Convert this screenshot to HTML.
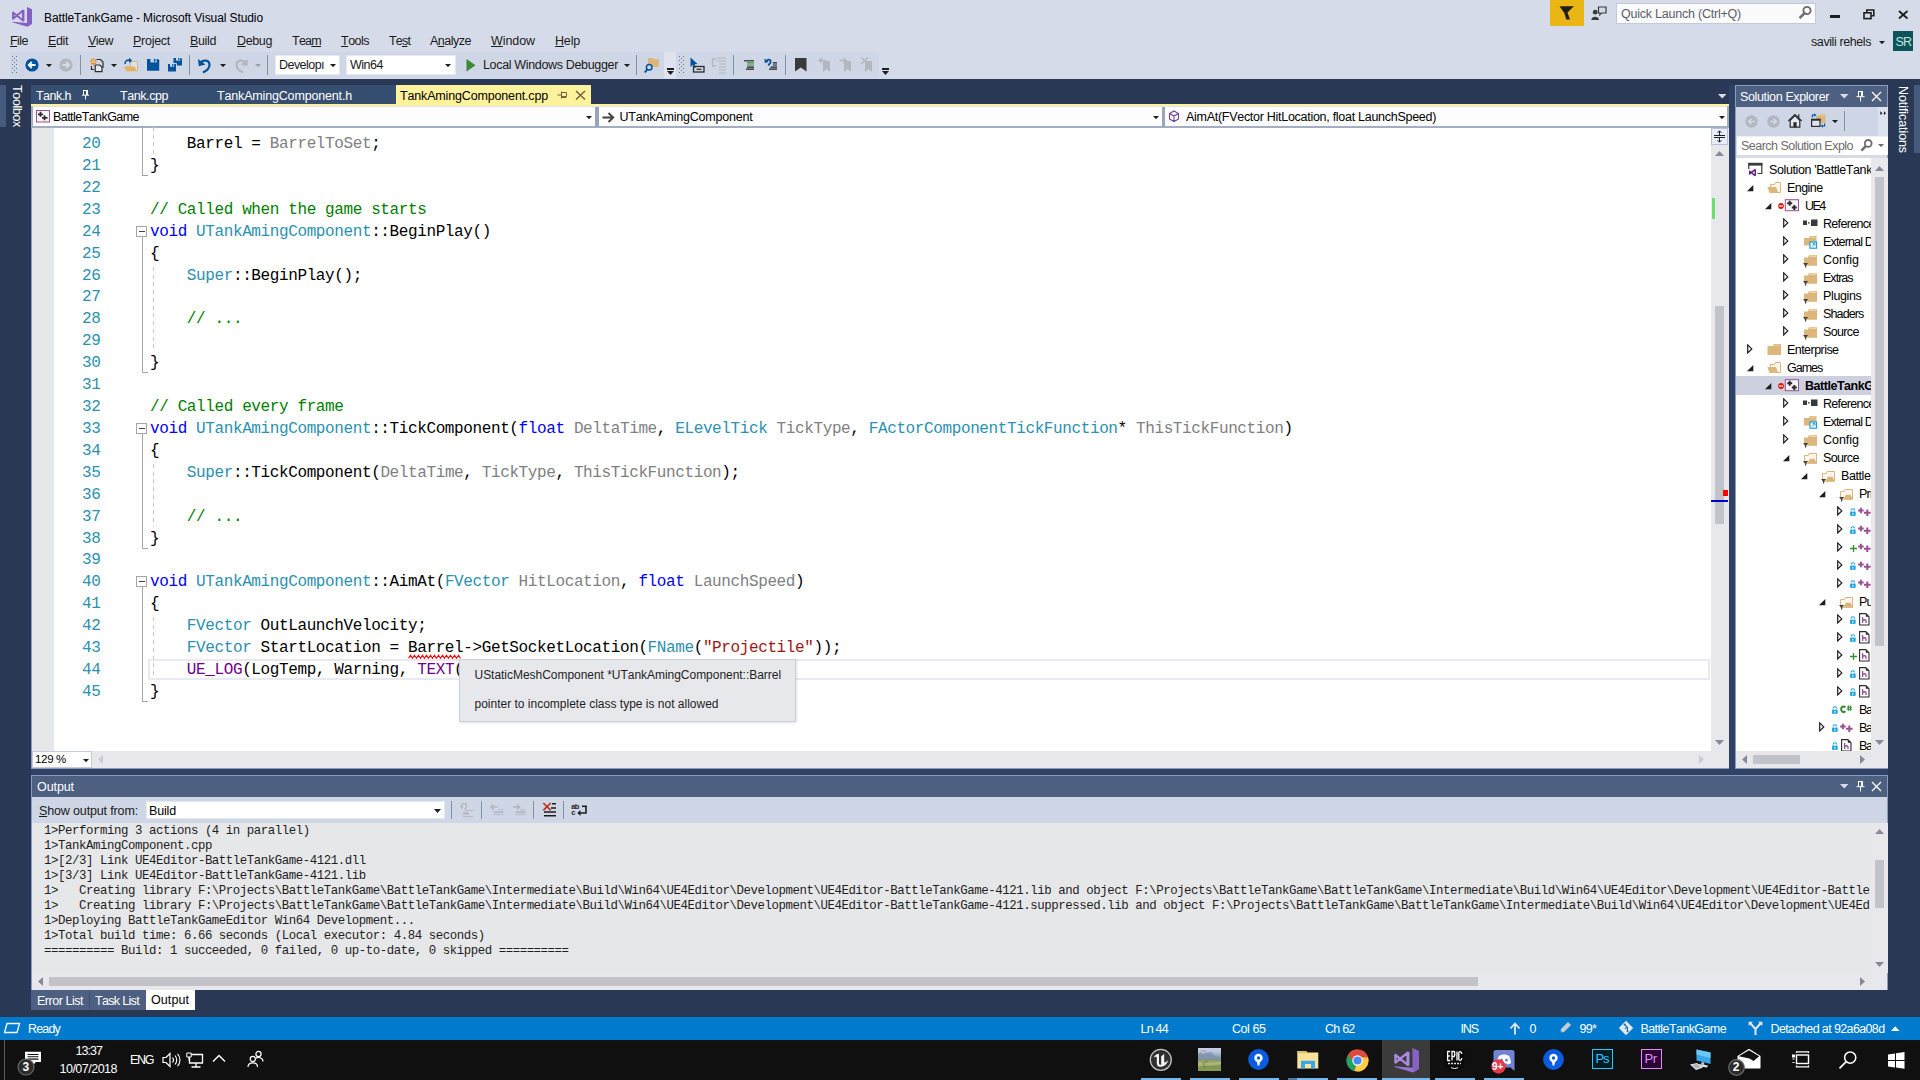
<!DOCTYPE html>
<html><head><meta charset="utf-8"><title>BattleTankGame - Microsoft Visual Studio</title>
<style>
html,body{margin:0;padding:0;}
body{width:1920px;height:1080px;overflow:hidden;position:relative;background:#293955;font-family:"Liberation Sans",sans-serif;font-kerning:none;}
.t{position:absolute;white-space:pre;overflow:visible;}
.r{position:absolute;}
.m{font-family:"Liberation Mono",monospace;}
u{text-decoration:underline;text-underline-offset:1px;}
</style></head>
<body>
<!-- top -->
<div class="r" style="left:0px;top:0px;width:1920px;height:79px;background:#d6dbe9;"></div>
<div class="r" style="left:10px;top:52px;width:654px;height:26px;background:#cfd6e5;"></div>
<div class="r" style="left:664px;top:52px;width:12px;height:26px;background:#dfe3ef;"></div>
<div class="r" style="left:676px;top:52px;width:203px;height:26px;background:#cfd6e5;"></div>
<svg class="r" style="left:11px;top:6px;" width="22" height="22" viewBox="0 0 22 22"><path d="M16 1 L21 3.3 V18 L16.4 20.8 L1 16.3 L1.6 15.7 L16 17Z" fill="#865fc5"/><path d="M2 6.5 V12.7 L12 4.6 V14.6Z" stroke="#865fc5" stroke-width="1.9" fill="none" stroke-linejoin="round"/><path d="M12.3 4 V15.2" stroke="#865fc5" stroke-width="2.2"/></svg>
<div class="t" style="left:44px;top:8.992px;font-size:12px;line-height:18px;height:18px;color:#000;letter-spacing:-0.094px;">BattleTankGame - Microsoft Visual Studio</div>
<div class="t" style="left:10px;top:31.5687px;font-size:12.5px;line-height:18.5px;height:18.5px;color:#1b1b1b;letter-spacing:-0.534px;"><u>F</u>ile</div>
<div class="t" style="left:48px;top:31.5687px;font-size:12.5px;line-height:18.5px;height:18.5px;color:#1b1b1b;letter-spacing:-0.384px;"><u>E</u>dit</div>
<div class="t" style="left:88px;top:31.5687px;font-size:12.5px;line-height:18.5px;height:18.5px;color:#1b1b1b;letter-spacing:-0.522px;"><u>V</u>iew</div>
<div class="t" style="left:133px;top:31.5687px;font-size:12.5px;line-height:18.5px;height:18.5px;color:#1b1b1b;letter-spacing:-0.271px;"><u>P</u>roject</div>
<div class="t" style="left:190px;top:31.5687px;font-size:12.5px;line-height:18.5px;height:18.5px;color:#1b1b1b;letter-spacing:-0.358px;"><u>B</u>uild</div>
<div class="t" style="left:237px;top:31.5687px;font-size:12.5px;line-height:18.5px;height:18.5px;color:#1b1b1b;letter-spacing:-0.365px;"><u>D</u>ebug</div>
<div class="t" style="left:292px;top:31.5687px;font-size:12.5px;line-height:18.5px;height:18.5px;color:#1b1b1b;letter-spacing:-0.737px;">Tea<u>m</u></div>
<div class="t" style="left:341px;top:31.5687px;font-size:12.5px;line-height:18.5px;height:18.5px;color:#1b1b1b;letter-spacing:-0.512px;"><u>T</u>ools</div>
<div class="t" style="left:389px;top:31.5687px;font-size:12.5px;line-height:18.5px;height:18.5px;color:#1b1b1b;letter-spacing:-0.828px;">Te<u>s</u>t</div>
<div class="t" style="left:430px;top:31.5687px;font-size:12.5px;line-height:18.5px;height:18.5px;color:#1b1b1b;letter-spacing:-0.495px;">A<u>n</u>alyze</div>
<div class="t" style="left:491px;top:31.5687px;font-size:12.5px;line-height:18.5px;height:18.5px;color:#1b1b1b;letter-spacing:-0.075px;"><u>W</u>indow</div>
<div class="t" style="left:555px;top:31.5687px;font-size:12.5px;line-height:18.5px;height:18.5px;color:#1b1b1b;letter-spacing:-0.175px;"><u>H</u>elp</div>
<svg class="r" style="left:12px;top:56px" width="6" height="18"><rect x="0" y="0" width="1" height="1" fill="#6b7590"/><rect x="2" y="2" width="1" height="1" fill="#6b7590"/><rect x="0" y="4" width="1" height="1" fill="#6b7590"/><rect x="2" y="6" width="1" height="1" fill="#6b7590"/><rect x="0" y="8" width="1" height="1" fill="#6b7590"/><rect x="2" y="10" width="1" height="1" fill="#6b7590"/><rect x="0" y="12" width="1" height="1" fill="#6b7590"/><rect x="2" y="14" width="1" height="1" fill="#6b7590"/><rect x="0" y="16" width="1" height="1" fill="#6b7590"/><rect x="4" y="0" width="1" height="1" fill="#6b7590"/><rect x="4" y="4" width="1" height="1" fill="#6b7590"/><rect x="4" y="8" width="1" height="1" fill="#6b7590"/><rect x="4" y="12" width="1" height="1" fill="#6b7590"/><rect x="4" y="16" width="1" height="1" fill="#6b7590"/></svg>
<svg class="r" style="left:679px;top:56px" width="6" height="18"><rect x="0" y="0" width="1" height="1" fill="#6b7590"/><rect x="2" y="2" width="1" height="1" fill="#6b7590"/><rect x="0" y="4" width="1" height="1" fill="#6b7590"/><rect x="2" y="6" width="1" height="1" fill="#6b7590"/><rect x="0" y="8" width="1" height="1" fill="#6b7590"/><rect x="2" y="10" width="1" height="1" fill="#6b7590"/><rect x="0" y="12" width="1" height="1" fill="#6b7590"/><rect x="2" y="14" width="1" height="1" fill="#6b7590"/><rect x="0" y="16" width="1" height="1" fill="#6b7590"/><rect x="4" y="0" width="1" height="1" fill="#6b7590"/><rect x="4" y="4" width="1" height="1" fill="#6b7590"/><rect x="4" y="8" width="1" height="1" fill="#6b7590"/><rect x="4" y="12" width="1" height="1" fill="#6b7590"/><rect x="4" y="16" width="1" height="1" fill="#6b7590"/></svg>
<svg class="r" style="left:25px;top:58px;" width="14" height="14" viewBox="0 0 14 14"><circle cx="7" cy="7" r="6.6" fill="#00539c"/><path d="M10.5 7 L4 7 M6.8 4 L3.8 7 L6.8 10" stroke="#fff" stroke-width="1.8" fill="none"/></svg>
<svg class="r" style="left:46px;top:64px;" width="6" height="3.2" viewBox="0 0 6 3.2"><path d="M0 0 L6 0 L3 3.2Z" fill="#1e1e1e"/></svg>
<svg class="r" style="left:59px;top:58px;" width="14" height="14" viewBox="0 0 14 14"><circle cx="7" cy="7" r="6.6" fill="#b3b7c0"/><path d="M3.5 7 L10 7 M7.2 4 L10.2 7 L7.2 10" stroke="#d6dbe9" stroke-width="1.8" fill="none"/></svg>
<div class="r" style="left:80px;top:55px;width:1px;height:20px;background:#8591a8;"></div>
<svg class="r" style="left:89px;top:57px;" width="17" height="17" viewBox="0 0 17 17"><path d="M7.5 2.5 H11.5 L14 5 V11" fill="none" stroke="#2b2b2b" stroke-width="1.2"/><path d="M6.2 8 H10.8 L13 10.2 V14.6 H6.2Z" fill="#e4e8f2" stroke="#2b2b2b" stroke-width="1.2"/><path d="M2.5 9 V12.5 H5" fill="none" stroke="#2b2b2b" stroke-width="1.2"/><path d="M4.4 1.3 V8.3 M0.9 4.8 H7.9 M1.9 2.3 L6.9 7.3 M6.9 2.3 L1.9 7.3" stroke="#e08a1e" stroke-width="1.1"/><circle cx="4.4" cy="4.8" r="1.3" fill="#f7d9a0"/></svg>
<svg class="r" style="left:111px;top:64px;" width="6" height="3.2" viewBox="0 0 6 3.2"><path d="M0 0 L6 0 L3 3.2Z" fill="#1e1e1e"/></svg>
<svg class="r" style="left:123px;top:57px;" width="17" height="17" viewBox="0 0 17 17"><path d="M7.5 4.5 H14.5 V13.5 H7.5Z" fill="#dde0ea" stroke="#dcb67a" stroke-width="1"/><path d="M1 9.5 H11.5 L14 14.3 H3.2Z" fill="#e5b260"/><path d="M2.2 7 C1.6 3.5 4.5 2.6 7.5 3.4" stroke="#00539c" stroke-width="1.6" fill="none"/><path d="M6 0.8 L9.2 3.4 L6 6Z" fill="#00539c"/></svg>
<svg class="r" style="left:146px;top:58px;" width="14" height="14" viewBox="0 0 14 14"><path d="M1 1 H12 L13.2 2.2 V12.8 H1Z" fill="#00539c"/><rect x="4.5" y="1" width="6.2" height="3.4" fill="#cfd6e5"/><rect x="7.8" y="1" width="1.7" height="2.6" fill="#00539c"/></svg>
<svg class="r" style="left:166px;top:57px;" width="17" height="17" viewBox="0 0 17 17"><path d="M7.5 1 H15 L16 2 V8.5 H7.5Z" fill="#00539c"/><rect x="10" y="1" width="4.2" height="2.6" fill="#cfd6e5"/><rect x="12.2" y="1" width="1.2" height="2" fill="#00539c"/><path d="M1.5 6.5 H10.5 V15 H1.5Z" fill="#00539c" stroke="#cfd6e5" stroke-width="1"/><rect x="4" y="7" width="4.2" height="2.6" fill="#cfd6e5"/><rect x="6.2" y="7" width="1.2" height="2" fill="#00539c"/></svg>
<div class="r" style="left:189px;top:55px;width:1px;height:20px;background:#8591a8;"></div>
<svg class="r" style="left:197px;top:57px;" width="16" height="17" viewBox="0 0 16 17"><path d="M3 6.5 C6 2 12.5 3 12.5 8 C12.5 11 10 13.5 6 15.5" fill="none" stroke="#00539c" stroke-width="2.2"/><path d="M1 2 L1.8 9.2 L8.5 7.5Z" fill="#00539c"/></svg>
<svg class="r" style="left:220px;top:64px;" width="6" height="3.2" viewBox="0 0 6 3.2"><path d="M0 0 L6 0 L3 3.2Z" fill="#1e1e1e"/></svg>
<svg class="r" style="left:233px;top:57px;" width="16" height="17" viewBox="0 0 16 17"><path d="M13 6.5 C10 2 3.5 3 3.5 8 C3.5 11 6 13.5 10 15.5" fill="none" stroke="#b3b7c0" stroke-width="2.2"/><path d="M15 2 L14.2 9.2 L7.5 7.5Z" fill="#b3b7c0"/></svg>
<svg class="r" style="left:255px;top:64px;" width="6" height="3.2" viewBox="0 0 6 3.2"><path d="M0 0 L6 0 L3 3.2Z" fill="#9a9fa9"/></svg>
<div class="r" style="left:267px;top:55px;width:1px;height:20px;background:#8591a8;"></div>
<div class="r" style="left:275px;top:54.7px;width:64.7px;height:20.8px;background:#fff;border:1px solid #e4e8f1;box-sizing:border-box;"></div>
<div class="t" style="left:279px;top:55.5688px;font-size:12.5px;line-height:18.5px;height:18.5px;color:#1b1b1b;letter-spacing:-0.541px;">Developı</div>
<svg class="r" style="left:330px;top:64px;" width="6" height="3.2" viewBox="0 0 6 3.2"><path d="M0 0 L6 0 L3 3.2Z" fill="#1e1e1e"/></svg>
<div class="r" style="left:346px;top:54.7px;width:109.5px;height:20.8px;background:#fff;border:1px solid #e4e8f1;box-sizing:border-box;"></div>
<div class="t" style="left:350px;top:55.5688px;font-size:12.5px;line-height:18.5px;height:18.5px;color:#1b1b1b;letter-spacing:-0.485px;">Win64</div>
<svg class="r" style="left:445px;top:64px;" width="6" height="3.2" viewBox="0 0 6 3.2"><path d="M0 0 L6 0 L3 3.2Z" fill="#1e1e1e"/></svg>
<svg class="r" style="left:466px;top:59px;" width="10" height="13" viewBox="0 0 10 13"><path d="M0.5 0 L9.5 6.2 L0.5 12.5Z" fill="#388a34"/></svg>
<div class="t" style="left:483px;top:55.5688px;font-size:12.5px;line-height:18.5px;height:18.5px;color:#1b1b1b;letter-spacing:-0.337px;">Local Windows Debugger</div>
<svg class="r" style="left:624px;top:64px;" width="6" height="3.2" viewBox="0 0 6 3.2"><path d="M0 0 L6 0 L3 3.2Z" fill="#1e1e1e"/></svg>
<div class="r" style="left:636px;top:55px;width:1px;height:20px;background:#8591a8;"></div>
<svg class="r" style="left:644px;top:57px;" width="17" height="17" viewBox="0 0 17 17"><path d="M4 1 H9 L10 2.2 H15 V10 H4Z" fill="#dcb67a"/><circle cx="5.2" cy="10.2" r="2.8" fill="#cfd6e5" stroke="#00539c" stroke-width="1.5"/><path d="M3.4 12.2 L0.8 15.5" stroke="#00539c" stroke-width="2"/></svg>
<div class="r" style="left:666.5px;top:68px;width:7px;height:1.5px;background:#1e1e1e;"></div>
<svg class="r" style="left:666.5px;top:70.5px;" width="7" height="4" viewBox="0 0 7 4"><path d="M0 0 L7 0 L3.5 4Z" fill="#1e1e1e"/></svg>
<svg class="r" style="left:689px;top:57px;" width="17" height="17" viewBox="0 0 17 17"><path d="M1.5 0.5 L1.5 10 L4 7.8 L5.5 11 L7 10.2 L5.6 7.2 L8.5 7Z" fill="#00539c"/><rect x="4.5" y="9.5" width="10.5" height="5.5" fill="none" stroke="#2b2b2b" stroke-width="1.3"/><path d="M7.5 12.3 H12.5" stroke="#2b2b2b" stroke-width="1.2"/></svg>
<svg class="r" style="left:711px;top:57px;" width="17" height="17" viewBox="0 0 17 17"><path d="M5 2 H1.5 V9 H5" fill="none" stroke="#b3b7c0" stroke-width="1.3"/><path d="M6 1 H15 M6 4 H15 M8 7 H15 M8 10 H15 M8 13 H15 M8 16 H15" stroke="#b3b7c0" stroke-width="1.2"/></svg>
<div class="r" style="left:733px;top:55px;width:1px;height:20px;background:#8591a8;"></div>
<svg class="r" style="left:743px;top:58px;" width="12" height="14" viewBox="0 0 12 14"><path d="M1 2.8 H11" stroke="#1e1e1e" stroke-width="1.1"/><path d="M4 4.9 H11 M4 7 H11" stroke="#388a34" stroke-width="1.1"/><path d="M4 9.1 H11 M3 11.1 H11" stroke="#1e1e1e" stroke-width="1.1"/></svg>
<svg class="r" style="left:764px;top:57px;" width="15" height="16" viewBox="0 0 15 16"><path d="M2.4 4 C3.6 1.8 7 2.4 6.6 5 C6.4 6.6 4.8 7 4.4 8.6" fill="none" stroke="#00539c" stroke-width="1.7"/><path d="M0.4 1.4 L0.8 6 L4.8 5Z" fill="#00539c"/><path d="M8.8 5.9 H13 M8.8 8 H13 M6.5 10.1 H13 M5 12.1 H13" stroke="#1e1e1e" stroke-width="1.1"/></svg>
<div class="r" style="left:785px;top:55px;width:1px;height:20px;background:#8591a8;"></div>
<svg class="r" style="left:795px;top:58px;" width="12" height="14" viewBox="0 0 12 14"><path d="M0 0 H11.5 V13.5 L5.75 9.6 L0 13.5Z" fill="#3a3a3a"/></svg>
<svg class="r" style="left:818px;top:57px;" width="14" height="16" viewBox="0 0 14 16"><path d="M5 4 H12 V15 L8.5 12 L5 15Z" fill="#b3b7c0"/><path d="M8 3.5 H1.5 M4 1 L1.2 3.5 L4 6" stroke="#b3b7c0" stroke-width="1.5" fill="none"/></svg>
<svg class="r" style="left:839px;top:57px;" width="14" height="16" viewBox="0 0 14 16"><path d="M5 4 H12 V15 L8.5 12 L5 15Z" fill="#b3b7c0"/><path d="M0.5 3.5 H7 M4.5 1 L7.3 3.5 L4.5 6" stroke="#b3b7c0" stroke-width="1.5" fill="none"/></svg>
<svg class="r" style="left:860px;top:57px;" width="14" height="16" viewBox="0 0 14 16"><path d="M5 4 H12 V15 L8.5 12 L5 15Z" fill="#b3b7c0"/><path d="M1 0.5 L8 7 M8 0.5 L1 7" stroke="#b3b7c0" stroke-width="1.5" fill="none"/></svg>
<div class="r" style="left:882px;top:68px;width:7px;height:1.5px;background:#1e1e1e;"></div>
<svg class="r" style="left:882px;top:70.5px;" width="7" height="4" viewBox="0 0 7 4"><path d="M0 0 L7 0 L3.5 4Z" fill="#1e1e1e"/></svg>
<div class="r" style="left:1550px;top:0px;width:34px;height:26px;background:#eab613;"></div>
<svg class="r" style="left:1559px;top:5px;" width="16" height="16" viewBox="0 0 16 16"><path d="M0.5 1.3 H14.8 L8.5 7.5 L11 14.5 H7.3 L5.3 8Z" fill="#1e1e1e"/></svg>
<svg class="r" style="left:1591px;top:6px;" width="16" height="15" viewBox="0 0 16 15"><circle cx="4.2" cy="6.2" r="2.4" fill="#3a3a3a"/><path d="M0.3 14 C0.3 9.8 8 9.8 8 14Z" fill="#3a3a3a"/><path d="M7.5 1 H15 V7 H10.5 L8.8 8.8 V7 H7.5Z" fill="none" stroke="#3a3a3a" stroke-width="1.2"/></svg>
<div class="r" style="left:1616px;top:2.5px;width:199.5px;height:21.5px;background:#fbfbfd;border:1px solid #c2c9d9;box-sizing:border-box;"></div>
<div class="t" style="left:1621px;top:4.56875px;font-size:12.5px;line-height:18.5px;height:18.5px;color:#5a5e68;letter-spacing:-0.223px;">Quick Launch (Ctrl+Q)</div>
<svg class="r" style="left:1797px;top:5px;" width="16" height="16" viewBox="0 0 16 16"><circle cx="10" cy="5.5" r="3.6" fill="none" stroke="#6d6d6d" stroke-width="1.9"/><path d="M7.3 8.3 L2.6 13.2" stroke="#6d6d6d" stroke-width="2.6"/></svg>
<div class="r" style="left:1830px;top:15px;width:10px;height:2.5px;background:#1e1e1e;"></div>
<svg class="r" style="left:1863px;top:9px;" width="12" height="10.5" viewBox="0 0 12 10.5"><rect x="1" y="3.8" width="7" height="5.8" fill="none" stroke="#1e1e1e" stroke-width="1.6"/><path d="M3.8 3.5 V1 H10.8 V6.8 H8.5" fill="none" stroke="#1e1e1e" stroke-width="1.6"/></svg>
<svg class="r" style="left:1897.5px;top:9.5px;" width="10.5" height="9.5" viewBox="0 0 10.5 9.5"><path d="M1 1 L9.5 8.5 M9.5 1 L1 8.5" stroke="#1e1e1e" stroke-width="1.9"/></svg>
<div class="t" style="left:1811px;top:32.5688px;font-size:12.5px;line-height:18.5px;height:18.5px;color:#1b1b1b;letter-spacing:-0.407px;">savili rehels</div>
<svg class="r" style="left:1879px;top:40.5px;" width="6" height="3.2" viewBox="0 0 6 3.2"><path d="M0 0 L6 0 L3 3.2Z" fill="#1e1e1e"/></svg>
<div class="r" style="left:1893px;top:31px;width:20px;height:20px;background:#0b5558;"></div>
<div class="t" style="left:1895.5px;top:32.5688px;font-size:12.5px;line-height:18.5px;height:18.5px;color:#c7e0df;letter-spacing:-0.931px;">SR</div>
<!-- mid -->
<div class="r" style="left:1729px;top:85px;width:6px;height:684px;background:#2f4266;"></div>
<div class="r" style="left:31px;top:769px;width:1857px;height:6px;background:#2f4266;"></div>
<div class="r" style="left:0px;top:85px;width:6px;height:42px;background:#465a7d;"></div>
<div class="t" style="left:0px;top:85px;width:50px;height:18px;font-size:12.5px;line-height:18px;color:#fff;transform-origin:0 0;transform:translate(26px,0) rotate(90deg);letter-spacing:-0.35px;">Toolbox</div>
<div class="r" style="left:31px;top:85px;width:365px;height:19px;background:#364e6f;"></div>
<div class="t" style="left:36px;top:86.5688px;font-size:12.5px;line-height:18.5px;height:18.5px;color:#fff;letter-spacing:-0.535px;">Tank.h</div>
<svg class="r" style="left:81px;top:90px;" width="9" height="10" viewBox="0 0 9 10"><path d="M2 0.5 H7 M2.5 0.5 V5 M6.5 0.5 V5 M5.5 0.5 V5 M1 5.2 H8 M4.5 5.5 V9.5" stroke="#fff" stroke-width="1" fill="none"/></svg>
<div class="t" style="left:120px;top:86.5688px;font-size:12.5px;line-height:18.5px;height:18.5px;color:#fff;letter-spacing:-0.427px;">Tank.cpp</div>
<div class="t" style="left:217px;top:86.5688px;font-size:12.5px;line-height:18.5px;height:18.5px;color:#fff;letter-spacing:-0.163px;">TankAmingComponent.h</div>
<div class="r" style="left:396px;top:85px;width:195px;height:21px;background:#fff29d;"></div>
<div class="t" style="left:400px;top:86.5688px;font-size:12.5px;line-height:18.5px;height:18.5px;color:#000;letter-spacing:-0.157px;">TankAmingComponent.cpp</div>
<svg class="r" style="left:557px;top:90px;" width="11" height="10" viewBox="0 0 11 10"><path d="M0.5 5 H4 M4.5 1.5 V8.5 M4.5 2.5 H9.5 V6.5 H4.5 M4.5 7.5 H9.5" stroke="#75633d" stroke-width="1" fill="none"/></svg>
<svg class="r" style="left:575px;top:89.5px;" width="12" height="11" viewBox="0 0 12 11"><path d="M1 1 L10 9.5 M10 1 L1 9.5" stroke="#75633d" stroke-width="1.5"/></svg>
<svg class="r" style="left:1718px;top:93.5px;" width="9" height="5" viewBox="0 0 9 5"><path d="M0 0 H8.5 L4.25 4.5Z" fill="#d6dbe9"/></svg>
<div class="r" style="left:31px;top:104px;width:1698px;height:2px;background:#fff29d;"></div>
<div class="r" style="left:31px;top:106px;width:1698px;height:22px;background:#fdfdfe;"></div>
<div class="r" style="left:31px;top:106px;width:1698px;height:1px;background:#dfe3ee;"></div>
<div class="r" style="left:31px;top:126px;width:1698px;height:2px;background:#a3adc4;"></div>
<div class="r" style="left:31px;top:106px;width:2px;height:22px;background:#a3adc4;"></div>
<div class="r" style="left:1727px;top:106px;width:2px;height:22px;background:#a3adc4;"></div>
<div class="r" style="left:595px;top:107px;width:3.5px;height:20px;background:#9aa5bd;"></div>
<div class="r" style="left:1161.5px;top:107px;width:3.5px;height:20px;background:#9aa5bd;"></div>
<svg class="r" style="left:586px;top:116px;" width="6" height="3.2" viewBox="0 0 6 3.2"><path d="M0 0 L6 0 L3 3.2Z" fill="#1e1e1e"/></svg>
<svg class="r" style="left:1153px;top:116px;" width="6" height="3.2" viewBox="0 0 6 3.2"><path d="M0 0 L6 0 L3 3.2Z" fill="#1e1e1e"/></svg>
<svg class="r" style="left:1718.5px;top:116px;" width="6" height="3.2" viewBox="0 0 6 3.2"><path d="M0 0 L6 0 L3 3.2Z" fill="#1e1e1e"/></svg>
<svg class="r" style="left:36px;top:110px;" width="14" height="13" viewBox="0 0 14 13"><rect x="0.5" y="0.5" width="13" height="11.5" fill="#f5f5f5" stroke="#9b4f96" stroke-width="1"/><path d="M4.5 1.8 V6.8 M2 4.3 H7 M8.5 5.3 V10.3 M6 7.8 H11.5" stroke="#2b2b2b" stroke-width="1.7"/></svg>
<div class="t" style="left:53px;top:107.569px;font-size:12.5px;line-height:18.5px;height:18.5px;color:#000;letter-spacing:-0.556px;">BattleTankGame</div>
<svg class="r" style="left:602px;top:112px;" width="13" height="11" viewBox="0 0 13 11"><path d="M0.5 5.5 H11 M6.5 1 L11.2 5.5 L6.5 10" stroke="#424242" stroke-width="1.9" fill="none"/></svg>
<div class="t" style="left:619.5px;top:107.569px;font-size:12.5px;line-height:18.5px;height:18.5px;color:#000;letter-spacing:-0.203px;">UTankAmingComponent</div>
<svg class="r" style="left:1168px;top:110px;" width="12" height="13" viewBox="0 0 12 13"><path d="M6 1 L10.5 3.5 V9 L6 11.5 L1.5 9 V3.5Z M1.5 3.5 L6 6 L10.5 3.5 M6 6 V11.5" fill="none" stroke="#6f3f9c" stroke-width="1.1"/></svg>
<div class="t" style="left:1186px;top:107.569px;font-size:12.5px;line-height:18.5px;height:18.5px;color:#000;letter-spacing:-0.280px;">AimAt(FVector HitLocation, float LaunchSpeed)</div>
<div class="r" style="left:31px;top:128px;width:1698px;height:641px;background:#fff;"></div>
<div class="r" style="left:31px;top:128px;width:23px;height:623px;background:#e6e7e8;"></div>
<div class="r" style="left:142px;top:128px;width:1px;height:48px;background:#a5a5a5;"></div>
<div class="r" style="left:142px;top:175px;width:6px;height:1px;background:#a5a5a5;"></div>
<div class="r" style="left:142px;top:237px;width:1px;height:136px;background:#a5a5a5;"></div>
<div class="r" style="left:142px;top:372px;width:6px;height:1px;background:#a5a5a5;"></div>
<div class="r" style="left:136px;top:226px;width:11px;height:11px;background:#fff;border:1px solid #a5a5a5;box-sizing:border-box;"></div>
<div class="r" style="left:138.5px;top:231px;width:6px;height:1px;background:#444;"></div>
<div class="r" style="left:142px;top:434px;width:1px;height:115px;background:#a5a5a5;"></div>
<div class="r" style="left:142px;top:548px;width:6px;height:1px;background:#a5a5a5;"></div>
<div class="r" style="left:136px;top:423px;width:11px;height:11px;background:#fff;border:1px solid #a5a5a5;box-sizing:border-box;"></div>
<div class="r" style="left:138.5px;top:428px;width:6px;height:1px;background:#444;"></div>
<div class="r" style="left:142px;top:587px;width:1px;height:115px;background:#a5a5a5;"></div>
<div class="r" style="left:142px;top:701px;width:6px;height:1px;background:#a5a5a5;"></div>
<div class="r" style="left:136px;top:576px;width:11px;height:11px;background:#fff;border:1px solid #a5a5a5;box-sizing:border-box;"></div>
<div class="r" style="left:138.5px;top:581px;width:6px;height:1px;background:#444;"></div>
<div class="r" style="left:153px;top:127.4px;width:1px;height:26.2px;background:repeating-linear-gradient(to bottom,#c6c6c6 0 4px,transparent 4px 7.73px);"></div>
<div class="r" style="left:153px;top:266.7px;width:1px;height:83.9px;background:repeating-linear-gradient(to bottom,#c6c6c6 0 4px,transparent 4px 7.73px);"></div>
<div class="r" style="left:153px;top:463.7px;width:1px;height:62.9px;background:repeating-linear-gradient(to bottom,#c6c6c6 0 4px,transparent 4px 7.73px);"></div>
<div class="r" style="left:153px;top:616.7px;width:1px;height:62.9px;background:repeating-linear-gradient(to bottom,#c6c6c6 0 4px,transparent 4px 7.73px);"></div>
<div class="r" style="left:148px;top:658.5px;width:1562px;height:21.5px;background:transparent;border:2px solid #e9e9f3;box-sizing:border-box;"></div>
<div class="t m" style="left:82px;top:133px;font-size:16px;line-height:22px;height:22px;color:#2b91af;letter-spacing:-0.387px;">20</div>
<div class="t m" style="left:150px;top:133px;font-size:16px;line-height:22px;height:22px;letter-spacing:-0.387px;"><span style="position:absolute;left:36.86px;color:#000000">Barrel = </span><span style="position:absolute;left:119.80px;color:#808080">BarrelToSet</span><span style="position:absolute;left:221.16px;color:#000000">;</span></div>
<div class="t m" style="left:82px;top:155px;font-size:16px;line-height:22px;height:22px;color:#2b91af;letter-spacing:-0.387px;">21</div>
<div class="t m" style="left:150px;top:155px;font-size:16px;line-height:22px;height:22px;letter-spacing:-0.387px;"><span style="position:absolute;left:0.00px;color:#000000">}</span></div>
<div class="t m" style="left:82px;top:177px;font-size:16px;line-height:22px;height:22px;color:#2b91af;letter-spacing:-0.387px;">22</div>
<div class="t m" style="left:82px;top:199px;font-size:16px;line-height:22px;height:22px;color:#2b91af;letter-spacing:-0.387px;">23</div>
<div class="t m" style="left:150px;top:199px;font-size:16px;line-height:22px;height:22px;letter-spacing:-0.387px;"><span style="position:absolute;left:0.00px;color:#008000">// Called when the game starts</span></div>
<div class="t m" style="left:82px;top:221px;font-size:16px;line-height:22px;height:22px;color:#2b91af;letter-spacing:-0.387px;">24</div>
<div class="t m" style="left:150px;top:221px;font-size:16px;line-height:22px;height:22px;letter-spacing:-0.387px;"><span style="position:absolute;left:0.00px;color:#0000ff">void</span><span style="position:absolute;left:46.08px;color:#2b91af">UTankAmingComponent</span><span style="position:absolute;left:221.16px;color:#000000">::BeginPlay()</span></div>
<div class="t m" style="left:82px;top:243px;font-size:16px;line-height:22px;height:22px;color:#2b91af;letter-spacing:-0.387px;">25</div>
<div class="t m" style="left:150px;top:243px;font-size:16px;line-height:22px;height:22px;letter-spacing:-0.387px;"><span style="position:absolute;left:0.00px;color:#000000">{</span></div>
<div class="t m" style="left:82px;top:265px;font-size:16px;line-height:22px;height:22px;color:#2b91af;letter-spacing:-0.387px;">26</div>
<div class="t m" style="left:150px;top:265px;font-size:16px;line-height:22px;height:22px;letter-spacing:-0.387px;"><span style="position:absolute;left:36.86px;color:#2b91af">Super</span><span style="position:absolute;left:82.94px;color:#000000">::BeginPlay();</span></div>
<div class="t m" style="left:82px;top:286px;font-size:16px;line-height:22px;height:22px;color:#2b91af;letter-spacing:-0.387px;">27</div>
<div class="t m" style="left:82px;top:308px;font-size:16px;line-height:22px;height:22px;color:#2b91af;letter-spacing:-0.387px;">28</div>
<div class="t m" style="left:150px;top:308px;font-size:16px;line-height:22px;height:22px;letter-spacing:-0.387px;"><span style="position:absolute;left:36.86px;color:#008000">// ...</span></div>
<div class="t m" style="left:82px;top:330px;font-size:16px;line-height:22px;height:22px;color:#2b91af;letter-spacing:-0.387px;">29</div>
<div class="t m" style="left:82px;top:352px;font-size:16px;line-height:22px;height:22px;color:#2b91af;letter-spacing:-0.387px;">30</div>
<div class="t m" style="left:150px;top:352px;font-size:16px;line-height:22px;height:22px;letter-spacing:-0.387px;"><span style="position:absolute;left:0.00px;color:#000000">}</span></div>
<div class="t m" style="left:82px;top:374px;font-size:16px;line-height:22px;height:22px;color:#2b91af;letter-spacing:-0.387px;">31</div>
<div class="t m" style="left:82px;top:396px;font-size:16px;line-height:22px;height:22px;color:#2b91af;letter-spacing:-0.387px;">32</div>
<div class="t m" style="left:150px;top:396px;font-size:16px;line-height:22px;height:22px;letter-spacing:-0.387px;"><span style="position:absolute;left:0.00px;color:#008000">// Called every frame</span></div>
<div class="t m" style="left:82px;top:418px;font-size:16px;line-height:22px;height:22px;color:#2b91af;letter-spacing:-0.387px;">33</div>
<div class="t m" style="left:150px;top:418px;font-size:16px;line-height:22px;height:22px;letter-spacing:-0.387px;"><span style="position:absolute;left:0.00px;color:#0000ff">void</span><span style="position:absolute;left:46.08px;color:#2b91af">UTankAmingComponent</span><span style="position:absolute;left:221.16px;color:#000000">::TickComponent(</span><span style="position:absolute;left:368.60px;color:#0000ff">float</span><span style="position:absolute;left:423.89px;color:#808080">DeltaTime</span><span style="position:absolute;left:506.82px;color:#000000">,</span><span style="position:absolute;left:525.25px;color:#2b91af">ELevelTick</span><span style="position:absolute;left:626.62px;color:#808080">TickType</span><span style="position:absolute;left:700.34px;color:#000000">,</span><span style="position:absolute;left:718.77px;color:#2b91af">FActorComponentTickFunction</span><span style="position:absolute;left:967.57px;color:#000000">*</span><span style="position:absolute;left:986.00px;color:#808080">ThisTickFunction</span><span style="position:absolute;left:1133.44px;color:#000000">)</span></div>
<div class="t m" style="left:82px;top:440px;font-size:16px;line-height:22px;height:22px;color:#2b91af;letter-spacing:-0.387px;">34</div>
<div class="t m" style="left:150px;top:440px;font-size:16px;line-height:22px;height:22px;letter-spacing:-0.387px;"><span style="position:absolute;left:0.00px;color:#000000">{</span></div>
<div class="t m" style="left:82px;top:462px;font-size:16px;line-height:22px;height:22px;color:#2b91af;letter-spacing:-0.387px;">35</div>
<div class="t m" style="left:150px;top:462px;font-size:16px;line-height:22px;height:22px;letter-spacing:-0.387px;"><span style="position:absolute;left:36.86px;color:#2b91af">Super</span><span style="position:absolute;left:82.94px;color:#000000">::TickComponent(</span><span style="position:absolute;left:230.38px;color:#808080">DeltaTime</span><span style="position:absolute;left:313.31px;color:#000000">,</span><span style="position:absolute;left:331.74px;color:#808080">TickType</span><span style="position:absolute;left:405.46px;color:#000000">,</span><span style="position:absolute;left:423.89px;color:#808080">ThisTickFunction</span><span style="position:absolute;left:571.33px;color:#000000">);</span></div>
<div class="t m" style="left:82px;top:484px;font-size:16px;line-height:22px;height:22px;color:#2b91af;letter-spacing:-0.387px;">36</div>
<div class="t m" style="left:82px;top:506px;font-size:16px;line-height:22px;height:22px;color:#2b91af;letter-spacing:-0.387px;">37</div>
<div class="t m" style="left:150px;top:506px;font-size:16px;line-height:22px;height:22px;letter-spacing:-0.387px;"><span style="position:absolute;left:36.86px;color:#008000">// ...</span></div>
<div class="t m" style="left:82px;top:528px;font-size:16px;line-height:22px;height:22px;color:#2b91af;letter-spacing:-0.387px;">38</div>
<div class="t m" style="left:150px;top:528px;font-size:16px;line-height:22px;height:22px;letter-spacing:-0.387px;"><span style="position:absolute;left:0.00px;color:#000000">}</span></div>
<div class="t m" style="left:82px;top:549px;font-size:16px;line-height:22px;height:22px;color:#2b91af;letter-spacing:-0.387px;">39</div>
<div class="t m" style="left:82px;top:571px;font-size:16px;line-height:22px;height:22px;color:#2b91af;letter-spacing:-0.387px;">40</div>
<div class="t m" style="left:150px;top:571px;font-size:16px;line-height:22px;height:22px;letter-spacing:-0.387px;"><span style="position:absolute;left:0.00px;color:#0000ff">void</span><span style="position:absolute;left:46.08px;color:#2b91af">UTankAmingComponent</span><span style="position:absolute;left:221.16px;color:#000000">::AimAt(</span><span style="position:absolute;left:294.88px;color:#2b91af">FVector</span><span style="position:absolute;left:368.60px;color:#808080">HitLocation</span><span style="position:absolute;left:469.96px;color:#000000">,</span><span style="position:absolute;left:488.39px;color:#0000ff">float</span><span style="position:absolute;left:543.68px;color:#808080">LaunchSpeed</span><span style="position:absolute;left:645.05px;color:#000000">)</span></div>
<div class="t m" style="left:82px;top:593px;font-size:16px;line-height:22px;height:22px;color:#2b91af;letter-spacing:-0.387px;">41</div>
<div class="t m" style="left:150px;top:593px;font-size:16px;line-height:22px;height:22px;letter-spacing:-0.387px;"><span style="position:absolute;left:0.00px;color:#000000">{</span></div>
<div class="t m" style="left:82px;top:615px;font-size:16px;line-height:22px;height:22px;color:#2b91af;letter-spacing:-0.387px;">42</div>
<div class="t m" style="left:150px;top:615px;font-size:16px;line-height:22px;height:22px;letter-spacing:-0.387px;"><span style="position:absolute;left:36.86px;color:#2b91af">FVector</span><span style="position:absolute;left:110.58px;color:#000000">OutLaunchVelocity;</span></div>
<div class="t m" style="left:82px;top:637px;font-size:16px;line-height:22px;height:22px;color:#2b91af;letter-spacing:-0.387px;">43</div>
<div class="t m" style="left:150px;top:637px;font-size:16px;line-height:22px;height:22px;letter-spacing:-0.387px;"><span style="position:absolute;left:36.86px;color:#2b91af">FVector</span><span style="position:absolute;left:110.58px;color:#000000">StartLocation = Barrel-&gt;GetSocketLocation(</span><span style="position:absolute;left:497.61px;color:#2b91af">FName</span><span style="position:absolute;left:543.68px;color:#000000">(</span><span style="position:absolute;left:552.90px;color:#a31515">"Projectile"</span><span style="position:absolute;left:663.48px;color:#000000">));</span></div>
<div class="t m" style="left:82px;top:659px;font-size:16px;line-height:22px;height:22px;color:#2b91af;letter-spacing:-0.387px;">44</div>
<div class="t m" style="left:150px;top:659px;font-size:16px;line-height:22px;height:22px;letter-spacing:-0.387px;"><span style="position:absolute;left:36.86px;color:#6f008a">UE_LOG</span><span style="position:absolute;left:92.15px;color:#000000">(LogTemp, Warning, </span><span style="position:absolute;left:267.24px;color:#6f008a">TEXT</span><span style="position:absolute;left:304.09px;color:#000000">(</span></div>
<div class="t m" style="left:82px;top:681px;font-size:16px;line-height:22px;height:22px;color:#2b91af;letter-spacing:-0.387px;">45</div>
<div class="t m" style="left:150px;top:681px;font-size:16px;line-height:22px;height:22px;letter-spacing:-0.387px;"><span style="position:absolute;left:0.00px;color:#000000">}</span></div>
<svg class="r" style="left:0;top:0" width="1920" height="700"><path d="M408.5 658.3 L410.5 655.3 L412.5 658.3 L414.5 655.3 L416.5 658.3 L418.5 655.3 L420.5 658.3 L422.5 655.3 L424.5 658.3 L426.5 655.3 L428.5 658.3 L430.5 655.3 L432.5 658.3 L434.5 655.3 L436.5 658.3 L438.5 655.3 L440.5 658.3 L442.5 655.3 L444.5 658.3 L446.5 655.3 L448.5 658.3 L450.5 655.3 L452.5 658.3 L454.5 655.3 L456.5 658.3 L458.5 655.3 L460.5 658.3" fill="none" stroke="#ff0000" stroke-width="1.15"/></svg>
<div class="r" style="left:459px;top:659px;width:337px;height:62.5px;background:#e7e8ec;border:1px solid #cccedb;box-sizing:border-box;box-shadow:1px 1px 2px rgba(0,0,0,0.12);"></div>
<div class="t" style="left:474.5px;top:665.992px;font-size:12px;line-height:18px;height:18px;color:#1e1e1e;letter-spacing:-0.033px;">UStaticMeshComponent *UTankAmingComponent::Barrel</div>
<div class="t" style="left:474.5px;top:694.992px;font-size:12px;line-height:18px;height:18px;color:#1e1e1e;letter-spacing:-0.002px;">pointer to incomplete class type is not allowed</div>
<div class="r" style="left:1711px;top:128px;width:18px;height:623px;background:#e8e8ec;"></div>
<div class="r" style="left:1711px;top:128px;width:17px;height:17px;background:#e9edf8;border:1px solid #b9c2d8;box-sizing:border-box;"></div>
<svg class="r" style="left:1713px;top:130px;" width="13" height="13" viewBox="0 0 13 13"><path d="M1 5.5 H12 M1 7.5 H12 M6.5 1 V5 M6.5 8 V12 M4.5 2.8 L6.5 0.8 L8.5 2.8 M4.5 10.2 L6.5 12.2 L8.5 10.2" stroke="#1e1e1e" stroke-width="1" fill="none"/></svg>
<svg class="r" style="left:1715px;top:150.5px;" width="9" height="5" viewBox="0 0 9 5"><path d="M0 5 H9 L4.5 0Z" fill="#868999"/></svg>
<svg class="r" style="left:1715px;top:740px;" width="9" height="5" viewBox="0 0 9 5"><path d="M0 0 H9 L4.5 5Z" fill="#868999"/></svg>
<div class="r" style="left:1712px;top:198px;width:3px;height:21px;background:#6ce26c;"></div>
<div class="r" style="left:1715px;top:306px;width:9px;height:218px;background:#c2c3c9;"></div>
<div class="r" style="left:1723px;top:490px;width:5px;height:6px;background:#ff0000;"></div>
<div class="r" style="left:1711px;top:500px;width:17px;height:2px;background:#0000cd;"></div>
<div class="r" style="left:31px;top:751px;width:1698px;height:17px;background:#e8e8ec;"></div>
<div class="r" style="left:32px;top:751px;width:60px;height:17px;background:#fff;border:1px solid #c5cbdb;box-sizing:border-box;"></div>
<div class="t" style="left:35px;top:751.415px;font-size:11.5px;line-height:17.5px;height:17.5px;color:#000;letter-spacing:-0.320px;">129 %</div>
<svg class="r" style="left:83px;top:759px;" width="6" height="3.2" viewBox="0 0 6 3.2"><path d="M0 0 L6 0 L3 3.2Z" fill="#1e1e1e"/></svg>
<svg class="r" style="left:98px;top:754.8px;" width="5" height="9" viewBox="0 0 5 9"><path d="M5 0 V9 L0 4.5Z" fill="#cacbd3"/></svg>
<svg class="r" style="left:1699px;top:754.8px;" width="5" height="9" viewBox="0 0 5 9"><path d="M0 0 V9 L5 4.5Z" fill="#cacbd3"/></svg>
<div class="r" style="left:31px;top:767.5px;width:1698px;height:1.5px;background:#8e9bbc;"></div>
<div class="r" style="left:31px;top:128px;width:1px;height:640px;background:#8e9bbc;"></div>
<!-- side -->
<div class="r" style="left:1735px;top:85px;width:153px;height:684px;background:#8e9bbc;"></div>
<div class="r" style="left:1736px;top:86px;width:151px;height:21px;background:#4d6082;"></div>
<div class="t" style="left:1740px;top:87.5688px;font-size:12.5px;line-height:18.5px;height:18.5px;color:#fff;letter-spacing:-0.363px;">Solution Explorer</div>
<svg class="r" style="left:1840px;top:94px;" width="9" height="5" viewBox="0 0 9 5"><path d="M0 0 H8.5 L4.25 4.5Z" fill="#d6dbe9"/></svg>
<svg class="r" style="left:1856px;top:91px;" width="9" height="11" viewBox="0 0 9 11"><path d="M2 0.5 H7 M2.5 0.5 V5.5 M6.5 0.5 V5.5 M5.5 0.5 V5.5 M0.5 5.7 H8.5 M4.5 6 V10.5" stroke="#fff" stroke-width="1" fill="none"/></svg>
<svg class="r" style="left:1871px;top:91px;" width="11" height="11" viewBox="0 0 11 11"><path d="M1 1 L10 10 M10 1 L1 10" stroke="#fff" stroke-width="1.3"/></svg>
<div class="r" style="left:1736px;top:107px;width:151px;height:29px;background:#cfd6e5;"></div>
<div class="r" style="left:1878px;top:107px;width:10px;height:29px;background:#dde2ef;"></div>
<svg class="r" style="left:1880px;top:111px;" width="8" height="5" viewBox="0 0 8 5"><path d="M0.3 0.3 L2.5 2.2 L0.3 4.1Z M3.9 0.3 L6.1 2.2 L3.9 4.1Z" fill="#1e1e1e"/></svg>
<svg class="r" style="left:1744.5px;top:114.5px;" width="13" height="13" viewBox="0 0 13 13"><circle cx="6.5" cy="6.5" r="6.2" fill="#b3b7c0"/><path d="M10 6.5 H4 M6.5 3.8 L3.6 6.5 L6.5 9.2" stroke="#cfd6e5" stroke-width="1.6" fill="none"/></svg>
<svg class="r" style="left:1766.5px;top:114.5px;" width="13" height="13" viewBox="0 0 13 13"><circle cx="6.5" cy="6.5" r="6.2" fill="#b3b7c0"/><path d="M3 6.5 H9 M6.5 3.8 L9.4 6.5 L6.5 9.2" stroke="#cfd6e5" stroke-width="1.6" fill="none"/></svg>
<svg class="r" style="left:1787px;top:113px;" width="16" height="15" viewBox="0 0 16 15"><path d="M3.2 7.2 V14.2 H12.8 V7.2 L8 2.6Z" fill="#e6e9f3" stroke="#2b2b2b" stroke-width="1.2"/><path d="M1.3 8 L8 1.6 L14.7 8 M11.8 4.6 V1.2" stroke="#2b2b2b" stroke-width="1.2" fill="none"/><rect x="6.4" y="9.2" width="3.2" height="5" fill="#2b2b2b"/></svg>
<svg class="r" style="left:1810px;top:113px;" width="17" height="15" viewBox="0 0 17 15"><path d="M6 2.8 H9.3 L10.2 1 H15.4 V10 H6Z" fill="#dcb67a"/><path d="M10.8 2.2 H14.6" stroke="#f0dfbd" stroke-width="0.8"/><rect x="1.6" y="6.8" width="8.4" height="6.6" fill="#dfe3ee" stroke="#2b2b2b" stroke-width="1.2"/><path d="M1 6.6 H10.6" stroke="#2b2b2b" stroke-width="1.8"/><path d="M2.3 4.6 V2 H5" stroke="#00539c" stroke-width="1.1" fill="none"/><path d="M4.2 0.3 L6.4 2 L4.2 3.7Z" fill="#00539c"/><path d="M14.6 10.6 V13 H12" stroke="#00539c" stroke-width="1.1" fill="none"/><path d="M12.8 11.3 L10.6 13 L12.8 14.7Z" fill="#00539c"/></svg>
<svg class="r" style="left:1832px;top:120px;" width="6" height="3.2" viewBox="0 0 6 3.2"><path d="M0 0 L6 0 L3 3.2Z" fill="#1e1e1e"/></svg>
<div class="r" style="left:1844px;top:111px;width:1px;height:20px;background:#8591a8;"></div>
<div class="r" style="left:1736px;top:136px;width:151px;height:22px;background:#d6dbe9;"></div>
<div class="r" style="left:1737px;top:135.8px;width:150.5px;height:19.2px;background:#fff;border-top:1px solid #eef0f6;box-sizing:border-box;"></div>
<div class="t" style="left:1741px;top:136.569px;font-size:12.5px;line-height:18.5px;height:18.5px;color:#6d6d6d;letter-spacing:-0.523px;">Search Solution Explo</div>
<svg class="r" style="left:1859px;top:139px;" width="15" height="14" viewBox="0 0 15 14"><circle cx="9.2" cy="4.4" r="3.4" fill="none" stroke="#6d6d6d" stroke-width="1.8"/><path d="M6.8 7 L2.4 11.6" stroke="#6d6d6d" stroke-width="2.5"/></svg>
<svg class="r" style="left:1878px;top:143.8px;" width="6" height="3.2" viewBox="0 0 6 3.2"><path d="M0 0 L6 0 L3 3.2Z" fill="#6d6d6d"/></svg>
<div class="r" style="left:1736px;top:158px;width:135px;height:593px;background:#fff;"></div>
<div class="r" style="left:1871px;top:158px;width:17px;height:593px;background:#e8e8ec;"></div>
<svg class="r" style="left:1875px;top:166px;" width="9" height="5" viewBox="0 0 9 5"><path d="M0 5 H9 L4.5 0Z" fill="#868999"/></svg>
<svg class="r" style="left:1875px;top:740px;" width="9" height="5" viewBox="0 0 9 5"><path d="M0 0 H9 L4.5 5Z" fill="#868999"/></svg>
<div class="r" style="left:1875px;top:177px;width:9px;height:469px;background:#c2c3c9;"></div>
<div class="r" style="left:1736px;top:751px;width:152px;height:17px;background:#e8e8ec;"></div>
<svg class="r" style="left:1742px;top:754.8px;" width="5" height="9" viewBox="0 0 5 9"><path d="M5 0 V9 L0 4.5Z" fill="#868999"/></svg>
<svg class="r" style="left:1860px;top:754.8px;" width="5" height="9" viewBox="0 0 5 9"><path d="M0 0 V9 L5 4.5Z" fill="#868999"/></svg>
<div class="r" style="left:1753px;top:755px;width:47px;height:9px;background:#c2c3c9;"></div>
<div class="r" style="left:1736px;top:158px;width:135px;height:593px;overflow:hidden;">
<svg class="r" style="left:12px;top:4px;" width="15" height="15" viewBox="0 0 15 15"><path d="M0.8 7 V1.5 H13.8 V11.5 H9.5" fill="none" stroke="#3a3a3a" stroke-width="1.2"/><path d="M0.2 0.8 H14.4 V3.6 H0.2Z" fill="#3a3a3a"/><path d="M6.5 7 L8 7.6 V13.6 L6.5 14.2 L3.3 11.6 L1.8 12.8 L1 12.4 V8.8 L1.8 8.4 L3.3 9.6Z M6.5 9 L4.5 10.6 L6.5 12.2Z" fill="#68217a" fill-rule="evenodd"/></svg>
<div class="t" style="left:33px;top:2.56875px;font-size:12.5px;line-height:18.5px;height:18.5px;color:#000;letter-spacing:-0.389px;">Solution 'BattleTank</div>
<svg class="r" style="left:10.7px;top:27px;" width="7" height="7" viewBox="0 0 7 7"><path d="M6.3 0 V6.3 H0Z" fill="#1e1e1e"/></svg>
<svg class="r" style="left:31px;top:22px;" width="15" height="14" viewBox="0 0 15 14"><path d="M3.5 4.5 H7.5 L8.5 2.5 H13.5 V12.5 H3.5Z" fill="#faf6ee" stroke="#dcb67a" stroke-width="1"/><path d="M0.3 7 H9 L11.3 13 H2.6Z" fill="#dcb67a"/></svg>
<div class="t" style="left:51px;top:20.5687px;font-size:12.5px;line-height:18.5px;height:18.5px;color:#000;letter-spacing:-0.569px;">Engine</div>
<svg class="r" style="left:28.7px;top:45px;" width="7" height="7" viewBox="0 0 7 7"><path d="M6.3 0 V6.3 H0Z" fill="#1e1e1e"/></svg>
<svg class="r" style="left:48px;top:41px;" width="16" height="13" viewBox="0 0 16 13"><rect x="1.3" y="0.7" width="13.2" height="11" fill="#f5f5f5" stroke="#9b4f96" stroke-width="1"/><path d="M5.7 1.8 V6.8 M3.2 4.3 H8.2 M10.3 6 V11 M7.8 8.5 H12.8" stroke="#2b2b2b" stroke-width="1.9"/></svg>
<svg class="r" style="left:42px;top:44.5px;" width="6" height="6" viewBox="0 0 6 6"><circle cx="3" cy="3" r="2.9" fill="#e51400"/><rect x="1.2" y="2.4" width="3.6" height="1.2" fill="#fff"/></svg>
<div class="t" style="left:69px;top:38.5688px;font-size:12.5px;line-height:18.5px;height:18.5px;color:#000;letter-spacing:-1.538px;">UE4</div>
<svg class="r" style="left:47px;top:60px;" width="6" height="10" viewBox="0 0 6 10"><path d="M0.7 0.9 L4.8 4.9 L0.7 8.9Z" fill="none" stroke="#1e1e1e" stroke-width="1.2"/></svg>
<svg class="r" style="left:67px;top:61px;" width="15" height="8" viewBox="0 0 15 8"><rect x="0" y="1.5" width="4" height="4.5" fill="#3a3a3a"/><rect x="5" y="3.2" width="1.6" height="1.4" fill="#3a3a3a"/><rect x="8" y="0.5" width="6.5" height="6.5" fill="#3a3a3a"/></svg>
<div class="t" style="left:87px;top:56.5688px;font-size:12.5px;line-height:18.5px;height:18.5px;color:#000;letter-spacing:-0.685px;">Reference</div>
<svg class="r" style="left:47px;top:78px;" width="6" height="10" viewBox="0 0 6 10"><path d="M0.7 0.9 L4.8 4.9 L0.7 8.9Z" fill="none" stroke="#1e1e1e" stroke-width="1.2"/></svg>
<svg class="r" style="left:67px;top:76px;" width="15" height="15" viewBox="0 0 15 15"><path d="M1 4 H6 L7 2 H13.5 V11.5 H1Z" fill="#dcb67a"/><path d="M7.8 3.2 H12.8" stroke="#f0dfbd" stroke-width="0.8"/><rect x="7" y="8" width="6.5" height="6.2" fill="#fff" stroke="#1ba1e2" stroke-width="1.2"/><path d="M9 12.3 L11.8 9.6 M9.8 9.5 H11.9 V11.6" stroke="#1ba1e2" stroke-width="1" fill="none"/></svg>
<div class="t" style="left:87px;top:74.5688px;font-size:12.5px;line-height:18.5px;height:18.5px;color:#000;letter-spacing:-0.835px;">External D</div>
<svg class="r" style="left:47px;top:96px;" width="6" height="10" viewBox="0 0 6 10"><path d="M0.7 0.9 L4.8 4.9 L0.7 8.9Z" fill="none" stroke="#1e1e1e" stroke-width="1.2"/></svg>
<svg class="r" style="left:67px;top:94px;" width="15" height="16" viewBox="0 0 15 16"><path d="M1 5.5 H5 L6 3.2 H14 V13.8 H1Z" fill="#dcb67a"/><path d="M7 4.5 H13.2" stroke="#f0dfbd" stroke-width="0.8"/><path d="M0 11 H5.2 L3.2 13.2 V15.4 H2 V13.2Z" fill="#424242"/></svg>
<div class="t" style="left:87px;top:92.5688px;font-size:12.5px;line-height:18.5px;height:18.5px;color:#000;letter-spacing:-0.021px;">Config</div>
<svg class="r" style="left:47px;top:114px;" width="6" height="10" viewBox="0 0 6 10"><path d="M0.7 0.9 L4.8 4.9 L0.7 8.9Z" fill="none" stroke="#1e1e1e" stroke-width="1.2"/></svg>
<svg class="r" style="left:67px;top:112px;" width="15" height="16" viewBox="0 0 15 16"><path d="M1 5.5 H5 L6 3.2 H14 V13.8 H1Z" fill="#dcb67a"/><path d="M7 4.5 H13.2" stroke="#f0dfbd" stroke-width="0.8"/><path d="M0 11 H5.2 L3.2 13.2 V15.4 H2 V13.2Z" fill="#424242"/></svg>
<div class="t" style="left:87px;top:110.569px;font-size:12.5px;line-height:18.5px;height:18.5px;color:#000;letter-spacing:-0.971px;">Extras</div>
<svg class="r" style="left:47px;top:132px;" width="6" height="10" viewBox="0 0 6 10"><path d="M0.7 0.9 L4.8 4.9 L0.7 8.9Z" fill="none" stroke="#1e1e1e" stroke-width="1.2"/></svg>
<svg class="r" style="left:67px;top:130px;" width="15" height="16" viewBox="0 0 15 16"><path d="M1 5.5 H5 L6 3.2 H14 V13.8 H1Z" fill="#dcb67a"/><path d="M7 4.5 H13.2" stroke="#f0dfbd" stroke-width="0.8"/><path d="M0 11 H5.2 L3.2 13.2 V15.4 H2 V13.2Z" fill="#424242"/></svg>
<div class="t" style="left:87px;top:128.569px;font-size:12.5px;line-height:18.5px;height:18.5px;color:#000;letter-spacing:-0.355px;">Plugins</div>
<svg class="r" style="left:47px;top:150px;" width="6" height="10" viewBox="0 0 6 10"><path d="M0.7 0.9 L4.8 4.9 L0.7 8.9Z" fill="none" stroke="#1e1e1e" stroke-width="1.2"/></svg>
<svg class="r" style="left:67px;top:148px;" width="15" height="16" viewBox="0 0 15 16"><path d="M1 5.5 H5 L6 3.2 H14 V13.8 H1Z" fill="#dcb67a"/><path d="M7 4.5 H13.2" stroke="#f0dfbd" stroke-width="0.8"/><path d="M0 11 H5.2 L3.2 13.2 V15.4 H2 V13.2Z" fill="#424242"/></svg>
<div class="t" style="left:87px;top:146.569px;font-size:12.5px;line-height:18.5px;height:18.5px;color:#000;letter-spacing:-0.864px;">Shaders</div>
<svg class="r" style="left:47px;top:168px;" width="6" height="10" viewBox="0 0 6 10"><path d="M0.7 0.9 L4.8 4.9 L0.7 8.9Z" fill="none" stroke="#1e1e1e" stroke-width="1.2"/></svg>
<svg class="r" style="left:67px;top:166px;" width="15" height="16" viewBox="0 0 15 16"><path d="M1 5.5 H5 L6 3.2 H14 V13.8 H1Z" fill="#dcb67a"/><path d="M7 4.5 H13.2" stroke="#f0dfbd" stroke-width="0.8"/><path d="M0 11 H5.2 L3.2 13.2 V15.4 H2 V13.2Z" fill="#424242"/></svg>
<div class="t" style="left:87px;top:164.569px;font-size:12.5px;line-height:18.5px;height:18.5px;color:#000;letter-spacing:-0.633px;">Source</div>
<svg class="r" style="left:11px;top:186px;" width="6" height="10" viewBox="0 0 6 10"><path d="M0.7 0.9 L4.8 4.9 L0.7 8.9Z" fill="none" stroke="#1e1e1e" stroke-width="1.2"/></svg>
<svg class="r" style="left:31px;top:184px;" width="15" height="14" viewBox="0 0 15 14"><path d="M0.5 4 H6 L7 2 H14 V13 H0.5Z" fill="#dcb67a"/><path d="M7.8 3.2 H13" stroke="#f0dfbd" stroke-width="0.8"/></svg>
<div class="t" style="left:51px;top:182.569px;font-size:12.5px;line-height:18.5px;height:18.5px;color:#000;letter-spacing:-0.546px;">Enterprise</div>
<svg class="r" style="left:10.7px;top:207px;" width="7" height="7" viewBox="0 0 7 7"><path d="M6.3 0 V6.3 H0Z" fill="#1e1e1e"/></svg>
<svg class="r" style="left:31px;top:202px;" width="15" height="14" viewBox="0 0 15 14"><path d="M3.5 4.5 H7.5 L8.5 2.5 H13.5 V12.5 H3.5Z" fill="#faf6ee" stroke="#dcb67a" stroke-width="1"/><path d="M0.3 7 H9 L11.3 13 H2.6Z" fill="#dcb67a"/></svg>
<div class="t" style="left:51px;top:200.569px;font-size:12.5px;line-height:18.5px;height:18.5px;color:#000;letter-spacing:-0.998px;">Games</div>
<div class="r" style="left:0px;top:218px;width:135px;height:18.5px;background:#ccd0df;"></div>
<svg class="r" style="left:28.7px;top:225px;" width="7" height="7" viewBox="0 0 7 7"><path d="M6.3 0 V6.3 H0Z" fill="#1e1e1e"/></svg>
<svg class="r" style="left:48px;top:221px;" width="16" height="13" viewBox="0 0 16 13"><rect x="1.3" y="0.7" width="13.2" height="11" fill="#f5f5f5" stroke="#9b4f96" stroke-width="1"/><path d="M5.7 1.8 V6.8 M3.2 4.3 H8.2 M10.3 6 V11 M7.8 8.5 H12.8" stroke="#2b2b2b" stroke-width="1.9"/></svg>
<svg class="r" style="left:42px;top:224.5px;" width="6" height="6" viewBox="0 0 6 6"><circle cx="3" cy="3" r="2.9" fill="#e51400"/><rect x="1.2" y="2.4" width="3.6" height="1.2" fill="#fff"/></svg>
<div class="t" style="left:69px;top:218.569px;font-size:12.5px;line-height:18.5px;height:18.5px;color:#000;letter-spacing:-0.474px;font-weight:bold;">BattleTankGame</div>
<svg class="r" style="left:47px;top:240px;" width="6" height="10" viewBox="0 0 6 10"><path d="M0.7 0.9 L4.8 4.9 L0.7 8.9Z" fill="none" stroke="#1e1e1e" stroke-width="1.2"/></svg>
<svg class="r" style="left:67px;top:241px;" width="15" height="8" viewBox="0 0 15 8"><rect x="0" y="1.5" width="4" height="4.5" fill="#3a3a3a"/><rect x="5" y="3.2" width="1.6" height="1.4" fill="#3a3a3a"/><rect x="8" y="0.5" width="6.5" height="6.5" fill="#3a3a3a"/></svg>
<div class="t" style="left:87px;top:236.569px;font-size:12.5px;line-height:18.5px;height:18.5px;color:#000;letter-spacing:-0.685px;">Reference</div>
<svg class="r" style="left:47px;top:258px;" width="6" height="10" viewBox="0 0 6 10"><path d="M0.7 0.9 L4.8 4.9 L0.7 8.9Z" fill="none" stroke="#1e1e1e" stroke-width="1.2"/></svg>
<svg class="r" style="left:67px;top:256px;" width="15" height="15" viewBox="0 0 15 15"><path d="M1 4 H6 L7 2 H13.5 V11.5 H1Z" fill="#dcb67a"/><path d="M7.8 3.2 H12.8" stroke="#f0dfbd" stroke-width="0.8"/><rect x="7" y="8" width="6.5" height="6.2" fill="#fff" stroke="#1ba1e2" stroke-width="1.2"/><path d="M9 12.3 L11.8 9.6 M9.8 9.5 H11.9 V11.6" stroke="#1ba1e2" stroke-width="1" fill="none"/></svg>
<div class="t" style="left:87px;top:254.569px;font-size:12.5px;line-height:18.5px;height:18.5px;color:#000;letter-spacing:-0.835px;">External D</div>
<svg class="r" style="left:47px;top:276px;" width="6" height="10" viewBox="0 0 6 10"><path d="M0.7 0.9 L4.8 4.9 L0.7 8.9Z" fill="none" stroke="#1e1e1e" stroke-width="1.2"/></svg>
<svg class="r" style="left:67px;top:274px;" width="15" height="16" viewBox="0 0 15 16"><path d="M1 5.5 H5 L6 3.2 H14 V13.8 H1Z" fill="#dcb67a"/><path d="M7 4.5 H13.2" stroke="#f0dfbd" stroke-width="0.8"/><path d="M0 11 H5.2 L3.2 13.2 V15.4 H2 V13.2Z" fill="#424242"/></svg>
<div class="t" style="left:87px;top:272.569px;font-size:12.5px;line-height:18.5px;height:18.5px;color:#000;letter-spacing:-0.021px;">Config</div>
<svg class="r" style="left:46.7px;top:297px;" width="7" height="7" viewBox="0 0 7 7"><path d="M6.3 0 V6.3 H0Z" fill="#1e1e1e"/></svg>
<svg class="r" style="left:67px;top:292px;" width="15" height="16" viewBox="0 0 15 16"><path d="M1.5 5.5 H5.2 L6.2 3.5 H13.5 V13.3 H1.5Z" fill="#faf6ee" stroke="#dcb67a" stroke-width="1"/><path d="M4.6 13.6 L6.8 8.8 H11.6 L13.8 13.6Z" fill="#dcb67a"/><path d="M0 11 H5.2 L3.2 13.2 V15.4 H2 V13.2Z" fill="#424242"/></svg>
<div class="t" style="left:87px;top:290.569px;font-size:12.5px;line-height:18.5px;height:18.5px;color:#000;letter-spacing:-0.633px;">Source</div>
<svg class="r" style="left:64.7px;top:315px;" width="7" height="7" viewBox="0 0 7 7"><path d="M6.3 0 V6.3 H0Z" fill="#1e1e1e"/></svg>
<svg class="r" style="left:85px;top:310px;" width="15" height="16" viewBox="0 0 15 16"><path d="M1.5 5.5 H5.2 L6.2 3.5 H13.5 V13.3 H1.5Z" fill="#faf6ee" stroke="#dcb67a" stroke-width="1"/><path d="M4.6 13.6 L6.8 8.8 H11.6 L13.8 13.6Z" fill="#dcb67a"/><path d="M0 11 H5.2 L3.2 13.2 V15.4 H2 V13.2Z" fill="#424242"/></svg>
<div class="t" style="left:105px;top:308.569px;font-size:12.5px;line-height:18.5px;height:18.5px;color:#000;letter-spacing:-0.410px;">Battle</div>
<svg class="r" style="left:82.7px;top:333px;" width="7" height="7" viewBox="0 0 7 7"><path d="M6.3 0 V6.3 H0Z" fill="#1e1e1e"/></svg>
<svg class="r" style="left:103px;top:328px;" width="15" height="16" viewBox="0 0 15 16"><path d="M1.5 5.5 H5.2 L6.2 3.5 H13.5 V13.3 H1.5Z" fill="#faf6ee" stroke="#dcb67a" stroke-width="1"/><path d="M4.6 13.6 L6.8 8.8 H11.6 L13.8 13.6Z" fill="#dcb67a"/><path d="M0 11 H5.2 L3.2 13.2 V15.4 H2 V13.2Z" fill="#424242"/></svg>
<div class="t" style="left:123px;top:326.569px;font-size:12.5px;line-height:18.5px;height:18.5px;color:#000;letter-spacing:-0.758px;">Pri</div>
<svg class="r" style="left:101px;top:348px;" width="6" height="10" viewBox="0 0 6 10"><path d="M0.7 0.9 L4.8 4.9 L0.7 8.9Z" fill="none" stroke="#1e1e1e" stroke-width="1.2"/></svg>
<svg class="r" style="left:122px;top:348px;" width="14" height="11" viewBox="0 0 14 11"><path d="M2.9 1.7 V7.3 M0.1 4.5 H5.7 M9.3 3.5 V10 M6 6.8 H12.6" stroke="#9b4f96" stroke-width="2"/></svg>
<svg class="r" style="left:113.6px;top:350px;" width="6" height="8" viewBox="0 0 6 8"><path d="M1.2 2.6 V2.2 C1.2 0.2 4.6 0.2 4.6 2.2 V2.6" stroke="#1ba1e2" stroke-width="1.1" fill="none"/><rect x="0.1" y="3.6" width="5.5" height="4.2" fill="#1ba1e2"/><rect x="2.3" y="4.8" width="1.1" height="1.9" fill="#fff"/></svg>
<svg class="r" style="left:101px;top:366px;" width="6" height="10" viewBox="0 0 6 10"><path d="M0.7 0.9 L4.8 4.9 L0.7 8.9Z" fill="none" stroke="#1e1e1e" stroke-width="1.2"/></svg>
<svg class="r" style="left:122px;top:366px;" width="14" height="11" viewBox="0 0 14 11"><path d="M2.9 1.7 V7.3 M0.1 4.5 H5.7 M9.3 3.5 V10 M6 6.8 H12.6" stroke="#9b4f96" stroke-width="2"/></svg>
<svg class="r" style="left:113.6px;top:368px;" width="6" height="8" viewBox="0 0 6 8"><path d="M1.2 2.6 V2.2 C1.2 0.2 4.6 0.2 4.6 2.2 V2.6" stroke="#1ba1e2" stroke-width="1.1" fill="none"/><rect x="0.1" y="3.6" width="5.5" height="4.2" fill="#1ba1e2"/><rect x="2.3" y="4.8" width="1.1" height="1.9" fill="#fff"/></svg>
<svg class="r" style="left:101px;top:384px;" width="6" height="10" viewBox="0 0 6 10"><path d="M0.7 0.9 L4.8 4.9 L0.7 8.9Z" fill="none" stroke="#1e1e1e" stroke-width="1.2"/></svg>
<svg class="r" style="left:122px;top:384px;" width="14" height="11" viewBox="0 0 14 11"><path d="M2.9 1.7 V7.3 M0.1 4.5 H5.7 M9.3 3.5 V10 M6 6.8 H12.6" stroke="#9b4f96" stroke-width="2"/></svg>
<svg class="r" style="left:113.5px;top:387px;" width="7" height="7" viewBox="0 0 7 7"><path d="M3.5 0 V7 M0 3.5 H7" stroke="#388a34" stroke-width="1.3"/></svg>
<svg class="r" style="left:101px;top:402px;" width="6" height="10" viewBox="0 0 6 10"><path d="M0.7 0.9 L4.8 4.9 L0.7 8.9Z" fill="none" stroke="#1e1e1e" stroke-width="1.2"/></svg>
<svg class="r" style="left:122px;top:402px;" width="14" height="11" viewBox="0 0 14 11"><path d="M2.9 1.7 V7.3 M0.1 4.5 H5.7 M9.3 3.5 V10 M6 6.8 H12.6" stroke="#9b4f96" stroke-width="2"/></svg>
<svg class="r" style="left:113.6px;top:404px;" width="6" height="8" viewBox="0 0 6 8"><path d="M1.2 2.6 V2.2 C1.2 0.2 4.6 0.2 4.6 2.2 V2.6" stroke="#1ba1e2" stroke-width="1.1" fill="none"/><rect x="0.1" y="3.6" width="5.5" height="4.2" fill="#1ba1e2"/><rect x="2.3" y="4.8" width="1.1" height="1.9" fill="#fff"/></svg>
<svg class="r" style="left:101px;top:420px;" width="6" height="10" viewBox="0 0 6 10"><path d="M0.7 0.9 L4.8 4.9 L0.7 8.9Z" fill="none" stroke="#1e1e1e" stroke-width="1.2"/></svg>
<svg class="r" style="left:122px;top:420px;" width="14" height="11" viewBox="0 0 14 11"><path d="M2.9 1.7 V7.3 M0.1 4.5 H5.7 M9.3 3.5 V10 M6 6.8 H12.6" stroke="#9b4f96" stroke-width="2"/></svg>
<svg class="r" style="left:113.6px;top:422px;" width="6" height="8" viewBox="0 0 6 8"><path d="M1.2 2.6 V2.2 C1.2 0.2 4.6 0.2 4.6 2.2 V2.6" stroke="#1ba1e2" stroke-width="1.1" fill="none"/><rect x="0.1" y="3.6" width="5.5" height="4.2" fill="#1ba1e2"/><rect x="2.3" y="4.8" width="1.1" height="1.9" fill="#fff"/></svg>
<svg class="r" style="left:82.7px;top:441px;" width="7" height="7" viewBox="0 0 7 7"><path d="M6.3 0 V6.3 H0Z" fill="#1e1e1e"/></svg>
<svg class="r" style="left:103px;top:436px;" width="15" height="16" viewBox="0 0 15 16"><path d="M1.5 5.5 H5.2 L6.2 3.5 H13.5 V13.3 H1.5Z" fill="#faf6ee" stroke="#dcb67a" stroke-width="1"/><path d="M4.6 13.6 L6.8 8.8 H11.6 L13.8 13.6Z" fill="#dcb67a"/><path d="M0 11 H5.2 L3.2 13.2 V15.4 H2 V13.2Z" fill="#424242"/></svg>
<div class="t" style="left:123px;top:434.569px;font-size:12.5px;line-height:18.5px;height:18.5px;color:#000;letter-spacing:-0.894px;">Pu</div>
<svg class="r" style="left:101px;top:456px;" width="6" height="10" viewBox="0 0 6 10"><path d="M0.7 0.9 L4.8 4.9 L0.7 8.9Z" fill="none" stroke="#1e1e1e" stroke-width="1.2"/></svg>
<svg class="r" style="left:123px;top:455px;" width="11" height="13" viewBox="0 0 11 13"><path d="M0.6 0.6 H6.8 L10 3.8 V12 H0.6Z" fill="#fff" stroke="#2b2b2b" stroke-width="1.1"/><path d="M6.8 0.6 L10 3.8 H6.8Z" fill="#2b2b2b"/><path d="M3.6 4 V10 M3.6 7.6 C4.6 6.4 7 6.4 7 8 V10" stroke="#9b4f96" stroke-width="1.3" fill="none"/></svg>
<svg class="r" style="left:113.6px;top:458px;" width="6" height="8" viewBox="0 0 6 8"><path d="M1.2 2.6 V2.2 C1.2 0.2 4.6 0.2 4.6 2.2 V2.6" stroke="#1ba1e2" stroke-width="1.1" fill="none"/><rect x="0.1" y="3.6" width="5.5" height="4.2" fill="#1ba1e2"/><rect x="2.3" y="4.8" width="1.1" height="1.9" fill="#fff"/></svg>
<svg class="r" style="left:101px;top:474px;" width="6" height="10" viewBox="0 0 6 10"><path d="M0.7 0.9 L4.8 4.9 L0.7 8.9Z" fill="none" stroke="#1e1e1e" stroke-width="1.2"/></svg>
<svg class="r" style="left:123px;top:473px;" width="11" height="13" viewBox="0 0 11 13"><path d="M0.6 0.6 H6.8 L10 3.8 V12 H0.6Z" fill="#fff" stroke="#2b2b2b" stroke-width="1.1"/><path d="M6.8 0.6 L10 3.8 H6.8Z" fill="#2b2b2b"/><path d="M3.6 4 V10 M3.6 7.6 C4.6 6.4 7 6.4 7 8 V10" stroke="#9b4f96" stroke-width="1.3" fill="none"/></svg>
<svg class="r" style="left:113.6px;top:476px;" width="6" height="8" viewBox="0 0 6 8"><path d="M1.2 2.6 V2.2 C1.2 0.2 4.6 0.2 4.6 2.2 V2.6" stroke="#1ba1e2" stroke-width="1.1" fill="none"/><rect x="0.1" y="3.6" width="5.5" height="4.2" fill="#1ba1e2"/><rect x="2.3" y="4.8" width="1.1" height="1.9" fill="#fff"/></svg>
<svg class="r" style="left:101px;top:492px;" width="6" height="10" viewBox="0 0 6 10"><path d="M0.7 0.9 L4.8 4.9 L0.7 8.9Z" fill="none" stroke="#1e1e1e" stroke-width="1.2"/></svg>
<svg class="r" style="left:123px;top:491px;" width="11" height="13" viewBox="0 0 11 13"><path d="M0.6 0.6 H6.8 L10 3.8 V12 H0.6Z" fill="#fff" stroke="#2b2b2b" stroke-width="1.1"/><path d="M6.8 0.6 L10 3.8 H6.8Z" fill="#2b2b2b"/><path d="M3.6 4 V10 M3.6 7.6 C4.6 6.4 7 6.4 7 8 V10" stroke="#9b4f96" stroke-width="1.3" fill="none"/></svg>
<svg class="r" style="left:113.5px;top:495px;" width="7" height="7" viewBox="0 0 7 7"><path d="M3.5 0 V7 M0 3.5 H7" stroke="#388a34" stroke-width="1.3"/></svg>
<svg class="r" style="left:101px;top:510px;" width="6" height="10" viewBox="0 0 6 10"><path d="M0.7 0.9 L4.8 4.9 L0.7 8.9Z" fill="none" stroke="#1e1e1e" stroke-width="1.2"/></svg>
<svg class="r" style="left:123px;top:509px;" width="11" height="13" viewBox="0 0 11 13"><path d="M0.6 0.6 H6.8 L10 3.8 V12 H0.6Z" fill="#fff" stroke="#2b2b2b" stroke-width="1.1"/><path d="M6.8 0.6 L10 3.8 H6.8Z" fill="#2b2b2b"/><path d="M3.6 4 V10 M3.6 7.6 C4.6 6.4 7 6.4 7 8 V10" stroke="#9b4f96" stroke-width="1.3" fill="none"/></svg>
<svg class="r" style="left:113.6px;top:512px;" width="6" height="8" viewBox="0 0 6 8"><path d="M1.2 2.6 V2.2 C1.2 0.2 4.6 0.2 4.6 2.2 V2.6" stroke="#1ba1e2" stroke-width="1.1" fill="none"/><rect x="0.1" y="3.6" width="5.5" height="4.2" fill="#1ba1e2"/><rect x="2.3" y="4.8" width="1.1" height="1.9" fill="#fff"/></svg>
<svg class="r" style="left:101px;top:528px;" width="6" height="10" viewBox="0 0 6 10"><path d="M0.7 0.9 L4.8 4.9 L0.7 8.9Z" fill="none" stroke="#1e1e1e" stroke-width="1.2"/></svg>
<svg class="r" style="left:123px;top:527px;" width="11" height="13" viewBox="0 0 11 13"><path d="M0.6 0.6 H6.8 L10 3.8 V12 H0.6Z" fill="#fff" stroke="#2b2b2b" stroke-width="1.1"/><path d="M6.8 0.6 L10 3.8 H6.8Z" fill="#2b2b2b"/><path d="M3.6 4 V10 M3.6 7.6 C4.6 6.4 7 6.4 7 8 V10" stroke="#9b4f96" stroke-width="1.3" fill="none"/></svg>
<svg class="r" style="left:113.6px;top:530px;" width="6" height="8" viewBox="0 0 6 8"><path d="M1.2 2.6 V2.2 C1.2 0.2 4.6 0.2 4.6 2.2 V2.6" stroke="#1ba1e2" stroke-width="1.1" fill="none"/><rect x="0.1" y="3.6" width="5.5" height="4.2" fill="#1ba1e2"/><rect x="2.3" y="4.8" width="1.1" height="1.9" fill="#fff"/></svg>
<svg class="r" style="left:104px;top:547px;" width="13" height="9" viewBox="0 0 13 9"><path d="M5.4 2.3 C3.6 0.6 1.1 1.8 1.1 4.3 C1.1 6.8 3.6 8 5.4 6.3" stroke="#388a34" stroke-width="2" fill="none"/><path d="M8.4 0.6 V5.8 M10.4 0.6 V5.8 M6.8 2.2 H12 M6.8 4.2 H12" stroke="#388a34" stroke-width="1.1"/></svg>
<svg class="r" style="left:95.6px;top:548px;" width="6" height="8" viewBox="0 0 6 8"><path d="M1.2 2.6 V2.2 C1.2 0.2 4.6 0.2 4.6 2.2 V2.6" stroke="#1ba1e2" stroke-width="1.1" fill="none"/><rect x="0.1" y="3.6" width="5.5" height="4.2" fill="#1ba1e2"/><rect x="2.3" y="4.8" width="1.1" height="1.9" fill="#fff"/></svg>
<div class="t" style="left:123px;top:542.569px;font-size:12.5px;line-height:18.5px;height:18.5px;color:#000;letter-spacing:-1.394px;">Ba</div>
<svg class="r" style="left:83px;top:564px;" width="6" height="10" viewBox="0 0 6 10"><path d="M0.7 0.9 L4.8 4.9 L0.7 8.9Z" fill="none" stroke="#1e1e1e" stroke-width="1.2"/></svg>
<svg class="r" style="left:104px;top:564px;" width="14" height="11" viewBox="0 0 14 11"><path d="M2.9 1.7 V7.3 M0.1 4.5 H5.7 M9.3 3.5 V10 M6 6.8 H12.6" stroke="#9b4f96" stroke-width="2"/></svg>
<svg class="r" style="left:95.6px;top:566px;" width="6" height="8" viewBox="0 0 6 8"><path d="M1.2 2.6 V2.2 C1.2 0.2 4.6 0.2 4.6 2.2 V2.6" stroke="#1ba1e2" stroke-width="1.1" fill="none"/><rect x="0.1" y="3.6" width="5.5" height="4.2" fill="#1ba1e2"/><rect x="2.3" y="4.8" width="1.1" height="1.9" fill="#fff"/></svg>
<div class="t" style="left:123px;top:560.569px;font-size:12.5px;line-height:18.5px;height:18.5px;color:#000;letter-spacing:-1.394px;">Ba</div>
<svg class="r" style="left:105px;top:581px;" width="11" height="13" viewBox="0 0 11 13"><path d="M0.6 0.6 H6.8 L10 3.8 V12 H0.6Z" fill="#fff" stroke="#2b2b2b" stroke-width="1.1"/><path d="M6.8 0.6 L10 3.8 H6.8Z" fill="#2b2b2b"/><path d="M3.6 4 V10 M3.6 7.6 C4.6 6.4 7 6.4 7 8 V10" stroke="#9b4f96" stroke-width="1.3" fill="none"/></svg>
<svg class="r" style="left:95.6px;top:584px;" width="6" height="8" viewBox="0 0 6 8"><path d="M1.2 2.6 V2.2 C1.2 0.2 4.6 0.2 4.6 2.2 V2.6" stroke="#1ba1e2" stroke-width="1.1" fill="none"/><rect x="0.1" y="3.6" width="5.5" height="4.2" fill="#1ba1e2"/><rect x="2.3" y="4.8" width="1.1" height="1.9" fill="#fff"/></svg>
<div class="t" style="left:123px;top:578.569px;font-size:12.5px;line-height:18.5px;height:18.5px;color:#000;letter-spacing:-1.394px;">Ba</div>
</div>
<div class="r" style="left:1914px;top:85px;width:6px;height:68px;background:#465a7d;"></div>
<div class="t" style="left:0px;top:86px;width:80px;height:18px;font-size:12.5px;line-height:18px;color:#fff;transform-origin:0 0;transform:translate(1912px,0) rotate(90deg);letter-spacing:-0.08px;">Notifications</div>
<!-- bottom -->
<div class="r" style="left:31px;top:775px;width:1857px;height:215px;background:#8e9bbc;"></div>
<div class="r" style="left:32px;top:776px;width:1855px;height:21px;background:#4d6082;"></div>
<div class="t" style="left:37px;top:777.569px;font-size:12.5px;line-height:18.5px;height:18.5px;color:#fff;letter-spacing:-0.087px;">Output</div>
<svg class="r" style="left:1840px;top:784px;" width="9" height="5" viewBox="0 0 9 5"><path d="M0 0 H8.5 L4.25 4.5Z" fill="#d6dbe9"/></svg>
<svg class="r" style="left:1856px;top:781px;" width="9" height="11" viewBox="0 0 9 11"><path d="M2 0.5 H7 M2.5 0.5 V5.5 M6.5 0.5 V5.5 M5.5 0.5 V5.5 M0.5 5.7 H8.5 M4.5 6 V10.5" stroke="#fff" stroke-width="1" fill="none"/></svg>
<svg class="r" style="left:1871px;top:781px;" width="11" height="11" viewBox="0 0 11 11"><path d="M1 1 L10 10 M10 1 L1 10" stroke="#fff" stroke-width="1.3"/></svg>
<div class="r" style="left:32px;top:797px;width:1855px;height:26px;background:#cfd6e5;"></div>
<div class="t" style="left:39px;top:801.569px;font-size:12.5px;line-height:18.5px;height:18.5px;color:#1b1b1b;letter-spacing:-0.143px;"><u>S</u>how output from:</div>
<div class="r" style="left:145.5px;top:800.7px;width:299px;height:18.8px;background:#fff;border:1px solid #e4e8f1;box-sizing:border-box;"></div>
<div class="t" style="left:149px;top:801.569px;font-size:12.5px;line-height:18.5px;height:18.5px;color:#000;letter-spacing:-0.158px;">Build</div>
<svg class="r" style="left:434px;top:809px;" width="7" height="4" viewBox="0 0 7 4"><path d="M0 0 L7 0 L3.5 4Z" fill="#1e1e1e"/></svg>
<div class="r" style="left:451px;top:801px;width:1px;height:18px;background:#8591a8;"></div>
<svg class="r" style="left:460px;top:802px;" width="15" height="16" viewBox="0 0 15 16"><path d="M1.5 4 C1.5 0.5 6.5 0.5 6.5 4 C6.5 6 5 6.5 4.8 8" stroke="#b3b7c0" stroke-width="1.3" fill="none"/><path d="M0.3 3.5 L1.6 6 L3.3 3.8" stroke="#b3b7c0" stroke-width="1.1" fill="none"/><path d="M5 8.6 H13.8 M3 14.6 H13" stroke="#b3b7c0" stroke-width="0.9"/><rect x="3" y="10.3" width="6" height="2.3" fill="#b3b7c0"/></svg>
<div class="r" style="left:481px;top:801px;width:1px;height:18px;background:#8591a8;"></div>
<svg class="r" style="left:490px;top:802px;" width="15" height="16" viewBox="0 0 15 16"><path d="M1 5 H7.5 M3.5 2.5 L1 5 L3.5 7.5" stroke="#b3b7c0" stroke-width="1.5" fill="none"/><path d="M8 7.8 H13.5 M3.5 12.6 H13.5" stroke="#b3b7c0" stroke-width="0.9"/><rect x="3.5" y="9.3" width="10" height="1.8" fill="#b3b7c0"/></svg>
<svg class="r" style="left:512px;top:802px;" width="15" height="16" viewBox="0 0 15 16"><path d="M1 5 H7.5 M5 2.5 L7.5 5 L5 7.5" stroke="#b3b7c0" stroke-width="1.5" fill="none"/><path d="M8 7.8 H13.5 M3.5 12.6 H13.5" stroke="#b3b7c0" stroke-width="0.9"/><rect x="3.5" y="9.3" width="10" height="1.8" fill="#b3b7c0"/></svg>
<div class="r" style="left:533px;top:801px;width:1px;height:18px;background:#8591a8;"></div>
<svg class="r" style="left:542px;top:802px;" width="15" height="16" viewBox="0 0 15 16"><path d="M10 1.8 H14 M9 6 H14 M2 10 H14 M2 13.8 H14" stroke="#1e1e1e" stroke-width="1.6"/><path d="M1.3 1 L8.7 8.4 M8.7 1 L1.3 8.4" stroke="#c0301c" stroke-width="1.7"/></svg>
<div class="r" style="left:563px;top:801px;width:1px;height:18px;background:#8591a8;"></div>
<svg class="r" style="left:571px;top:802px;" width="16" height="16" viewBox="0 0 16 16"><path d="M15 4.3 V11 H7.5" stroke="#1e1e1e" stroke-width="1.6" fill="none"/><path d="M11 4.3 H15.8" stroke="#1e1e1e" stroke-width="1.6"/><path d="M9.5 8 L6.3 11 L9.5 14Z" fill="#1e1e1e"/></svg>
<div class="t" style="left:571.3px;top:802.051px;font-size:7.5px;line-height:9px;height:9px;color:#1e1e1e;letter-spacing:-0.626px;font-weight:bold;">ab</div>
<div class="t" style="left:571.3px;top:808.051px;font-size:7.5px;line-height:9px;height:9px;color:#1e1e1e;font-weight:bold;">c</div>
<div class="r" style="left:32px;top:823px;width:1855px;height:167px;background:#e6e7e8;"></div>
<div class="t m" style="left:44px;top:823.5px;font-size:12.4px;line-height:15px;height:15px;color:#1e1e1e;letter-spacing:-0.441px;">1&gt;Performing 3 actions (4 in parallel)</div>
<div class="t m" style="left:44px;top:838.5px;font-size:12.4px;line-height:15px;height:15px;color:#1e1e1e;letter-spacing:-0.441px;">1&gt;TankAmingComponent.cpp</div>
<div class="t m" style="left:44px;top:853.5px;font-size:12.4px;line-height:15px;height:15px;color:#1e1e1e;letter-spacing:-0.441px;">1&gt;[2/3] Link UE4Editor-BattleTankGame-4121.dll</div>
<div class="t m" style="left:44px;top:868.5px;font-size:12.4px;line-height:15px;height:15px;color:#1e1e1e;letter-spacing:-0.441px;">1&gt;[3/3] Link UE4Editor-BattleTankGame-4121.lib</div>
<div class="t m" style="left:44px;top:883.5px;font-size:12.4px;line-height:15px;height:15px;color:#1e1e1e;letter-spacing:-0.441px;">1&gt;   Creating library F:\Projects\BattleTankGame\BattleTankGame\Intermediate\Build\Win64\UE4Editor\Development\UE4Editor-BattleTankGame-4121.lib and object F:\Projects\BattleTankGame\BattleTankGame\Intermediate\Build\Win64\UE4Editor\Development\UE4Editor-Battle</div>
<div class="t m" style="left:44px;top:898.5px;font-size:12.4px;line-height:15px;height:15px;color:#1e1e1e;letter-spacing:-0.441px;">1&gt;   Creating library F:\Projects\BattleTankGame\BattleTankGame\Intermediate\Build\Win64\UE4Editor\Development\UE4Editor-BattleTankGame-4121.suppressed.lib and object F:\Projects\BattleTankGame\BattleTankGame\Intermediate\Build\Win64\UE4Editor\Development\UE4Ed</div>
<div class="t m" style="left:44px;top:913.5px;font-size:12.4px;line-height:15px;height:15px;color:#1e1e1e;letter-spacing:-0.441px;">1&gt;Deploying BattleTankGameEditor Win64 Development...</div>
<div class="t m" style="left:44px;top:928.5px;font-size:12.4px;line-height:15px;height:15px;color:#1e1e1e;letter-spacing:-0.441px;">1&gt;Total build time: 6.66 seconds (Local executor: 4.84 seconds)</div>
<div class="t m" style="left:44px;top:943.5px;font-size:12.4px;line-height:15px;height:15px;color:#1e1e1e;letter-spacing:-0.441px;">========== Build: 1 succeeded, 0 failed, 0 up-to-date, 0 skipped ==========</div>
<div class="r" style="left:1871px;top:823px;width:17px;height:150px;background:#e8e8ec;"></div>
<svg class="r" style="left:1875px;top:829px;" width="9" height="5" viewBox="0 0 9 5"><path d="M0 5 H9 L4.5 0Z" fill="#868999"/></svg>
<svg class="r" style="left:1875px;top:961.5px;" width="9" height="5" viewBox="0 0 9 5"><path d="M0 0 H9 L4.5 5Z" fill="#868999"/></svg>
<div class="r" style="left:1875px;top:860px;width:9px;height:48px;background:#c2c3c9;"></div>
<div class="r" style="left:32px;top:973px;width:1855px;height:17px;background:#e8e8ec;"></div>
<svg class="r" style="left:38px;top:976.5px;" width="5" height="9" viewBox="0 0 5 9"><path d="M5 0 V9 L0 4.5Z" fill="#868999"/></svg>
<svg class="r" style="left:1860px;top:976.5px;" width="5" height="9" viewBox="0 0 5 9"><path d="M0 0 V9 L5 4.5Z" fill="#868999"/></svg>
<div class="r" style="left:49px;top:977px;width:1429px;height:9px;background:#c2c3c9;"></div>
<div class="r" style="left:31px;top:990px;width:58px;height:20px;background:#4d6082;"></div>
<div class="r" style="left:89px;top:990px;width:57px;height:20px;background:#4d6082;"></div>
<div class="r" style="left:88.5px;top:991px;width:1px;height:18px;background:#3d4f70;"></div>
<div class="r" style="left:146px;top:990px;width:49px;height:20px;background:#fff;"></div>
<div class="t" style="left:37px;top:991.569px;font-size:12.5px;line-height:18.5px;height:18.5px;color:#fff;letter-spacing:-0.470px;">Error List</div>
<div class="t" style="left:95px;top:991.569px;font-size:12.5px;line-height:18.5px;height:18.5px;color:#fff;letter-spacing:-0.668px;">Task List</div>
<div class="t" style="left:151px;top:990.569px;font-size:12.5px;line-height:18.5px;height:18.5px;color:#000;letter-spacing:0.079px;">Output</div>
<div class="r" style="left:0px;top:1017px;width:1920px;height:23px;background:#007acc;"></div>
<svg class="r" style="left:3px;top:1022px;" width="18" height="12" viewBox="0 0 18 12"><path d="M4 1.5 H16.5 L14 10.5 H1.5Z" fill="none" stroke="#fff" stroke-width="1.3"/></svg>
<div class="t" style="left:28px;top:1019.57px;font-size:12.5px;line-height:18.5px;height:18.5px;color:#fff;letter-spacing:-0.825px;">Ready</div>
<div class="t" style="left:1140.5px;top:1019.57px;font-size:12.5px;line-height:18.5px;height:18.5px;color:#fff;letter-spacing:-0.755px;">Ln 44</div>
<div class="t" style="left:1232px;top:1019.57px;font-size:12.5px;line-height:18.5px;height:18.5px;color:#fff;letter-spacing:-0.438px;">Col 65</div>
<div class="t" style="left:1325px;top:1019.57px;font-size:12.5px;line-height:18.5px;height:18.5px;color:#fff;letter-spacing:-0.770px;">Ch 62</div>
<div class="t" style="left:1460.5px;top:1019.57px;font-size:12.5px;line-height:18.5px;height:18.5px;color:#fff;letter-spacing:-1.112px;">INS</div>
<svg class="r" style="left:1509px;top:1022px;" width="12" height="13" viewBox="0 0 12 13"><path d="M6 12.5 V2 M1.5 6.5 L6 1.5 L10.5 6.5" stroke="#e8e8e8" stroke-width="1.8" fill="none"/></svg>
<div class="t" style="left:1529.5px;top:1019.57px;font-size:12.5px;line-height:18.5px;height:18.5px;color:#fff;letter-spacing:-0.950px;">0</div>
<svg class="r" style="left:1559px;top:1021px;" width="13" height="13" viewBox="0 0 13 13"><path d="M1 12 L2 8 L9 1 L12 4 L5 11Z" fill="#c9ccd2"/><path d="M1 12 L1.6 9.5 L3.5 11.4Z" fill="#007acc"/></svg>
<div class="t" style="left:1579.5px;top:1019.57px;font-size:12.5px;line-height:18.5px;height:18.5px;color:#fff;letter-spacing:-0.754px;">99*</div>
<svg class="r" style="left:1618px;top:1020px;" width="16" height="16" viewBox="0 0 16 16"><path d="M8 0.8 L15.2 8 L8 15.2 L0.8 8Z" fill="#e4e6ea"/><path d="M6.5 4.5 L9.5 7.5 V11 M9.5 7.5 L6.8 8.5" stroke="#007acc" stroke-width="1.1" fill="none"/><circle cx="6.6" cy="4.6" r="1" fill="#007acc"/><circle cx="9.5" cy="11.2" r="1" fill="#007acc"/></svg>
<div class="t" style="left:1640.5px;top:1019.57px;font-size:12.5px;line-height:18.5px;height:18.5px;color:#fff;letter-spacing:-0.592px;">BattleTankGame</div>
<svg class="r" style="left:1748px;top:1021px;" width="15" height="15" viewBox="0 0 15 15"><path d="M7.5 14 V8 L2.5 2.5 M7.5 8 L12.5 2.5" stroke="#e4e6ea" stroke-width="2" fill="none"/><path d="M0.5 0.8 H5 L0.8 5Z M14.5 0.8 H10 L14.2 5Z" fill="#e4e6ea"/></svg>
<div class="t" style="left:1770.5px;top:1019.57px;font-size:12.5px;line-height:18.5px;height:18.5px;color:#fff;letter-spacing:-0.624px;">Detached at 92a6a08d</div>
<svg class="r" style="left:1891px;top:1025.5px;" width="9" height="5" viewBox="0 0 9 5"><path d="M0 5 H8.5 L4.25 0.3Z" fill="#fff"/></svg>
<div class="r" style="left:0px;top:1040px;width:1920px;height:40px;background:#101010;"></div>
<div class="r" style="left:4px;top:1040px;width:1px;height:40px;background:#5a5a5a;"></div>
<!-- task -->
<div class="r" style="left:1382px;top:1040px;width:48px;height:40px;background:#3b3b3b;"></div>
<div class="r" style="left:1140.5px;top:1077.7px;width:40.5px;height:2.3px;background:#76b9ed;"></div>
<div class="r" style="left:1190px;top:1077.7px;width:40px;height:2.3px;background:#76b9ed;"></div>
<div class="r" style="left:1239px;top:1077.7px;width:40px;height:2.3px;background:#76b9ed;"></div>
<div class="r" style="left:1288px;top:1077.7px;width:40px;height:2.3px;background:#76b9ed;"></div>
<div class="r" style="left:1337px;top:1077.7px;width:40px;height:2.3px;background:#76b9ed;"></div>
<div class="r" style="left:1382px;top:1077.7px;width:48px;height:2.3px;background:#76b9ed;"></div>
<div class="r" style="left:1435px;top:1077.7px;width:40px;height:2.3px;background:#76b9ed;"></div>
<div class="r" style="left:1484px;top:1077.7px;width:40px;height:2.3px;background:#76b9ed;"></div>
<div class="r" style="left:1288px;top:1077.7px;width:8.5px;height:2.3px;background:#4a7aa3;"></div>
<svg class="r" style="left:24px;top:1051px;" width="18" height="16" viewBox="0 0 18 16"><path d="M1 0.8 H17 V11 H12 L8.5 14.5 V11 H1Z" fill="#fff"/><path d="M3.5 3.5 H14.5 M3.5 5.8 H14.5 M3.5 8.1 H14.5" stroke="#101010" stroke-width="1.1"/></svg>
<svg class="r" style="left:17px;top:1058px;" width="18" height="18" viewBox="0 0 18 18"><circle cx="9" cy="9" r="8" fill="#2b2b2b" stroke="#6a6a6a" stroke-width="1.2"/></svg>
<div class="t" style="left:22.5px;top:1057.99px;font-size:12px;line-height:18px;height:18px;color:#fff;font-weight:bold;">3</div>
<div class="t" style="left:75.5px;top:1041.57px;font-size:12.5px;line-height:18.5px;height:18.5px;color:#fff;letter-spacing:-0.955px;">13:37</div>
<div class="t" style="left:59.5px;top:1059.57px;font-size:12.5px;line-height:18.5px;height:18.5px;color:#fff;letter-spacing:-0.505px;">10/07/2018</div>
<div class="t" style="left:130px;top:1050.57px;font-size:12.5px;line-height:18.5px;height:18.5px;color:#fff;letter-spacing:-1.362px;">ENG</div>
<svg class="r" style="left:162px;top:1052px;" width="19" height="16" viewBox="0 0 19 16"><path d="M1 5.5 H4 L8 1.5 V14.5 L4 10.5 H1Z" fill="none" stroke="#fff" stroke-width="1.2"/><path d="M10.5 5.5 C11.8 7 11.8 9 10.5 10.5 M13 3.5 C15.3 6 15.3 10 13 12.5 M15.5 1.8 C18.8 5 18.8 11 15.5 14.2" stroke="#fff" stroke-width="1.1" fill="none"/></svg>
<svg class="r" style="left:186px;top:1052px;" width="18" height="17" viewBox="0 0 18 17"><path d="M3.5 2.5 H16.5 V11 H3.5Z" fill="none" stroke="#fff" stroke-width="1.3"/><path d="M10 11 V14.5 M5.5 15 H14.5" stroke="#fff" stroke-width="1.3"/><path d="M0.8 1 H5.2 V5 H0.8Z" fill="#101010" stroke="#fff" stroke-width="1"/><path d="M3 5 V8.5" stroke="#fff" stroke-width="1"/></svg>
<svg class="r" style="left:212px;top:1054px;" width="14" height="9" viewBox="0 0 14 9"><path d="M1 7.5 L7 1.5 L13 7.5" stroke="#fff" stroke-width="1.4" fill="none"/></svg>
<svg class="r" style="left:247px;top:1050px;" width="17" height="18" viewBox="0 0 17 18"><circle cx="11.5" cy="4" r="2.6" fill="none" stroke="#fff" stroke-width="1.2"/><circle cx="5.8" cy="9" r="2.6" fill="none" stroke="#fff" stroke-width="1.2"/><path d="M1 17 C1 11.5 10.5 11.5 10.5 17 M8.8 8.3 C11.5 6.5 15.8 7.5 16 11.5" fill="none" stroke="#fff" stroke-width="1.2"/></svg>
<svg class="r" style="left:1149px;top:1048px;" width="24" height="24" viewBox="0 0 24 24"><circle cx="11.8" cy="11.8" r="10.5" fill="#303030" stroke="#c4c4c4" stroke-width="1.3"/><path d="M4.5 9.5 C6.5 6.5 8.5 5.8 10 5.8 V15.2 C10 16.6 11.2 17 12.2 16.4 V8.2 L15.2 6 V14.5 C16.4 14.8 17.8 13.6 19.2 12 C18.4 15.6 15.4 18.6 11.6 18.8 C9.6 18.8 7.8 17.6 7.8 15.4 V9.6 C7.8 8.4 6.4 8.4 4.5 9.5Z" fill="#f4f4f4"/></svg>
<div class="r" style="left:1198px;top:1048px;width:23px;height:23px;background:linear-gradient(180deg,#c9cdea 0%,#b9c3dc 18%,#8fa7a8 36%,#7f9a62 50%,#a3ab68 64%,#7d9550 80%,#8a9c58 100%);"></div>
<svg class="r" style="left:1198px;top:1048px;" width="23" height="23" viewBox="0 0 23 23"><path d="M0 7 L3 3 L6 2 L9 5 L13 4 L17 8 L23 10 V13 L12 11 L5 12 L0 11Z" fill="#7f93b5" opacity=".85"/><path d="M2 4 L5 2.5 L8 5 L5 6Z" fill="#d9c9b5" opacity=".8"/><path d="M0 15 C6 12.5 12 17 23 13.5 V16 C14 19 8 16 0 19Z" fill="#c2bf86" opacity=".6"/><path d="M5 14 L7 20 M6 14.5 L10 13.5" stroke="#5a5a40" stroke-width="0.7" opacity=".7"/></svg>
<svg class="r" style="left:1248.2px;top:1049px;" width="21" height="21" viewBox="0 0 21 21"><circle cx="10.5" cy="10.5" r="10.4" fill="#0b5ce0"/><circle cx="10.5" cy="9" r="4.2" fill="#fff"/><path d="M8.8 11 H12.2 L11.4 16.5 H9.6Z" fill="#fff"/><circle cx="10.5" cy="9" r="1.7" fill="#0b5ce0"/></svg>
<svg class="r" style="left:1542.5px;top:1049px;" width="21" height="21" viewBox="0 0 21 21"><circle cx="10.5" cy="10.5" r="10.4" fill="#0b5ce0"/><circle cx="10.5" cy="9" r="4.2" fill="#fff"/><path d="M8.8 11 H12.2 L11.4 16.5 H9.6Z" fill="#fff"/><circle cx="10.5" cy="9" r="1.7" fill="#0b5ce0"/></svg>
<svg class="r" style="left:1296px;top:1049px;" width="24" height="21" viewBox="0 0 24 21"><path d="M1.3 2 H10 L11.5 3.5 H22.3 V19.6 H1.3Z" fill="#fbe29a"/><path d="M1.3 2 H10 L11 3.2 V4.2 H1.3Z" fill="#f0c03c"/><path d="M3 3 H7" stroke="#8fd0f5" stroke-width="0.8"/><path d="M5 11.8 H19 V19.8 H15 V15 H9 V19.8 H5Z" fill="#3aa7e8"/></svg>
<svg class="r" style="left:1345.5px;top:1048.5px;" width="23" height="23" viewBox="0 0 23 23"><circle cx="11.5" cy="11.5" r="11" fill="#dd4b3e"/><path d="M11.5 11.5 L2 6 A11 11 0 0 0 8.5 22.1Z" fill="#1da462"/><path d="M11.5 11.5 L8.5 22.1 A11 11 0 0 0 22 8.3 L11.5 8.3Z" fill="#ffce44"/><path d="M2 6 A11 11 0 0 1 22 8.3 L11.5 8.3 L7 12Z" fill="#dd4b3e"/><circle cx="11.5" cy="11.5" r="5.2" fill="#fff"/><circle cx="11.5" cy="11.5" r="4.1" fill="#4a8af4"/></svg>
<svg class="r" style="left:1392.5px;top:1046.5px;" width="27" height="27" viewBox="0 0 22 22"><path d="M16 1 L21 3.3 V18 L16.4 20.8 L1 16.3 L1.6 15.7 L16 17Z" fill="#9572d6"/><path d="M16 1 L21 3.3 V18 L16.4 20.8Z" fill="#8661c5"/><path d="M2 6.5 V12.7 L12 4.6 V14.6Z" stroke="#a98be2" stroke-width="1.9" fill="none" stroke-linejoin="round"/><path d="M12.3 4 V15.2" stroke="#a98be2" stroke-width="2.2"/></svg>
<svg class="r" style="left:1444px;top:1048px;" width="21" height="24" viewBox="0 0 21 24"><path d="M0.5 1 H20.5 V18 C20.5 19.5 10.5 23.5 10.5 23.5 C10.5 23.5 0.5 19.5 0.5 18Z" fill="#0a0a0a"/><path d="M3.2 3.5 H6.2 M3.6 3.5 V12.5 M3.2 8 H5.8 M3.2 12.5 H6.2 M8 12.5 V3.5 H10 C11 3.5 11 8.5 10 8.5 H8 M13 3.5 V12.5 M17.8 6 C17.8 3 14.8 3 14.8 5 V11 C14.8 13 17.8 13 17.8 10" stroke="#fff" stroke-width="1.3" fill="none"/><path d="M4 15.5 H17" stroke="#ddd" stroke-width="1.4" stroke-dasharray="2 1"/><path d="M7 19.5 C9 20.8 12 20.8 14 19.5" stroke="#fff" stroke-width="1" fill="none"/></svg>
<svg class="r" style="left:1492px;top:1048px;" width="24" height="24" viewBox="0 0 24 24"><path d="M4 2 H20 C21.5 2 22.5 3 22.5 4.5 V23 L18.5 19.5 H4 C2.5 19.5 1.5 18.5 1.5 17 V4.5 C1.5 3 2.5 2 4 2Z" fill="#6f85d4"/><path d="M7 8 C10 6 14 6 17 8 C18.5 10.5 19 13 18.8 15 C17.5 16 16.5 16.3 15.5 16.5 L14.8 15.3 C13 15.8 11 15.8 9.2 15.3 L8.5 16.5 C7.5 16.3 6.5 16 5.2 15 C5 13 5.5 10.5 7 8Z" fill="#fff"/><circle cx="9.5" cy="12" r="1.5" fill="#6f85d4"/><circle cx="14.5" cy="12" r="1.5" fill="#6f85d4"/></svg>
<svg class="r" style="left:1490.5px;top:1058.5px;" width="15" height="15" viewBox="0 0 15 15"><circle cx="7.5" cy="7.5" r="7.2" fill="#e8384a"/></svg>
<div class="t" style="left:1492px;top:1058.69px;font-size:10px;line-height:16px;height:16px;color:#fff;letter-spacing:0.050px;font-weight:bold;">9+</div>
<div class="r" style="left:1591.5px;top:1048.5px;width:21px;height:20px;background:#001d26;border:1.5px solid #26c9ff;box-sizing:border-box;"></div>
<div class="t" style="left:1595.5px;top:1049.15px;font-size:13px;line-height:19px;height:19px;color:#26c9ff;letter-spacing:-1.085px;">Ps</div>
<div class="r" style="left:1640.5px;top:1048.5px;width:21px;height:20px;background:#2a0634;border:1.5px solid #e788ff;box-sizing:border-box;"></div>
<div class="t" style="left:1644.5px;top:1049.15px;font-size:13px;line-height:19px;height:19px;color:#e788ff;letter-spacing:-0.500px;">Pr</div>
<svg class="r" style="left:1688px;top:1048px;" width="24" height="24" viewBox="0 0 24 24"><path d="M8.5 1.5 L22.5 4.5 V16 L8.5 12.5Z" fill="#39a7ea"/><path d="M8.5 1.5 L22.5 4.5 V10 L8.5 6.5Z" fill="#6cc6f7"/><path d="M14 14 L16 14.5 L16.5 17 L12.5 16.5Z" fill="#bfc5cc"/><path d="M10 16 L20 17.5 L19 19.5 L9 18Z" fill="#dfe3e8"/><path d="M2 16.5 L9 15 L15 19.5 L8 22Z" fill="#e6e9ed"/><path d="M4 17 L9 16 L13 19 L8 20.6Z" fill="#a9b0b8"/></svg>
<svg class="r" style="left:1736px;top:1048px;" width="26" height="22" viewBox="0 0 26 22"><path d="M1.5 8 L13 0.8 L24.5 8 V20.5 H1.5Z" fill="#fff"/><path d="M2.8 8.2 L13 2.2 L23.2 8.2 L17.5 13 L13.5 10.5Z" fill="#101010"/><path d="M2.5 8.5 L12 16.5 L9 19.5Z" fill="#fff"/></svg>
<svg class="r" style="left:1727.5px;top:1058.5px;" width="17" height="17" viewBox="0 0 17 17"><circle cx="8.5" cy="8.5" r="7.8" fill="#2b2b2b" stroke="#6a6a6a" stroke-width="1.2"/></svg>
<div class="t" style="left:1732.7px;top:1057.99px;font-size:12px;line-height:18px;height:18px;color:#fff;font-weight:bold;">2</div>
<svg class="r" style="left:1792px;top:1051px;" width="18" height="17" viewBox="0 0 18 17"><rect x="4.5" y="4" width="12" height="8.5" fill="none" stroke="#fff" stroke-width="1.4"/><path d="M4.5 2 V0.8 H16.5 V2 M4.5 14.5 V15.8 H16.5 V14.5" stroke="#fff" stroke-width="1.3" fill="none"/><path d="M0.5 4 H2.5 V6 H0.5Z M0.5 8 H2.5 M0.5 11.5 H2.5" stroke="#fff" stroke-width="1.2" fill="#fff"/></svg>
<svg class="r" style="left:1838px;top:1050px;" width="20" height="20" viewBox="0 0 20 20"><circle cx="12.2" cy="7.6" r="5.6" fill="none" stroke="#fff" stroke-width="1.5"/><path d="M8.2 11.6 L1.5 18.3" stroke="#fff" stroke-width="1.7"/></svg>
<svg class="r" style="left:1887.5px;top:1051.5px;" width="17" height="17" viewBox="0 0 17 17"><path d="M0 2.4 L7 1.4 V8 H0Z M8 1.2 L16.5 0 V8 H8Z M0 9 H7 V15.4 L0 14.4Z M8 9 H16.5 V16.8 L8 15.6Z" fill="#fff"/></svg>
</body></html>
